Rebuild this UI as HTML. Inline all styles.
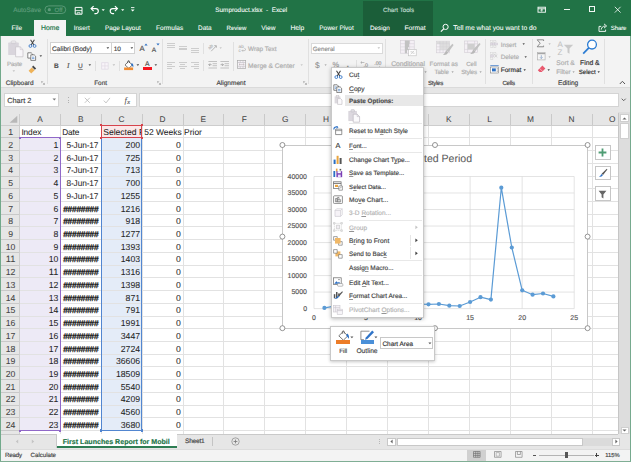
<!DOCTYPE html>
<html lang="en"><head><meta charset="utf-8"><title>Sumproduct.xlsx - Excel</title>
<style>
html,body{margin:0;padding:0}
body{width:631px;height:462px;overflow:hidden;position:relative;background:#fff;
font-family:"Liberation Sans",sans-serif;text-rendering:geometricPrecision;}
#app{position:absolute;left:0;top:0;width:631px;height:462px;overflow:hidden}
#app div,#app svg,#app span{position:absolute}
#app span{white-space:nowrap;line-height:1;display:block;-webkit-text-stroke:0.16px}
#app u{text-decoration:underline;text-decoration-thickness:0.5px;text-underline-offset:0.8px;text-decoration-color:rgba(60,60,60,0.55)}
</style></head>
<body><div id="app">
<div style="left:0.00px;top:0.00px;width:631.00px;height:36.00px;background:#217346;"></div><div style="left:363.00px;top:1.00px;width:69.80px;height:35.00px;background:#1b5e39;"></div><div style="left:34.30px;top:19.50px;width:31.90px;height:17.00px;background:#f3f3f3;"></div><span id="t0" style="top:8.13px;font-size:6.39px;color:#5e9c7b;left:13.30px;">AutoSave</span><svg style="left:44.00px;top:5.00px;" width="23" height="10" viewBox="0 0 23 10"><rect x="0.9" y="0.9" width="20.8" height="7.6" rx="3.8" fill="none" stroke="#5e9c7b" stroke-width="0.9"/><circle cx="5.3" cy="4.7" r="1.6" fill="#5e9c7b"/></svg><span id="t1" style="top:7.88px;font-size:6.07px;color:#5e9c7b;left:54.50px;">Off</span><svg style="left:74.00px;top:5.50px;" width="10" height="10" viewBox="0 0 10 10"><path d="M1.2 1.4h6.8v6.8H1.2z" fill="none" stroke="#fff" stroke-width="1"/><path d="M1.2 4.6h6.8" stroke="#fff" stroke-width="0.8"/><path d="M3.2 8.2V6.6h2.8v1.6" fill="none" stroke="#fff" stroke-width="0.7"/></svg><svg style="left:90.00px;top:5.00px;" width="16" height="10" viewBox="0 0 16 10"><path d="M1.2 3.6h4.6a2.5 2.5 0 0 1 0 5H4.4" fill="none" stroke="#fff" stroke-width="1.2"/><path d="M3.6 1.1L1.1 3.6l2.5 2.5" fill="none" stroke="#fff" stroke-width="1.2"/><path d="M11.6 4.2h3.2l-1.6 1.7z" fill="#fff"/></svg><svg style="left:109.00px;top:5.00px;" width="16" height="10" viewBox="0 0 16 10"><path d="M8.3 3.6H3.7a2.5 2.5 0 0 0 0 5H5.1" fill="none" stroke="#fff" stroke-width="1.2"/><path d="M5.9 1.1l2.5 2.5-2.5 2.5" fill="none" stroke="#fff" stroke-width="1.2"/><path d="M12.1 4.2h3.2l-1.6 1.7z" fill="#fff"/></svg><svg style="left:130.00px;top:6.00px;" width="6" height="8" viewBox="0 0 6 8"><path d="M1 1.6h3.4" stroke="#fff" stroke-width="0.9"/><path d="M0.8 3.6h3.8L2.7 5.6z" fill="#fff"/></svg><span id="t2" style="top:8.13px;font-size:6.38px;color:#fff;left:215.30px;-webkit-text-stroke:0.06px;">Sumproduct.xlsx&nbsp; -&nbsp; Excel</span><span id="t3" style="top:8.09px;font-size:6.16px;color:#bfd9cb;left:383.00px;">Chart Tools</span><svg style="left:536.50px;top:5.50px;" width="10" height="8" viewBox="0 0 10 8"><rect x="1" y="1.2" width="7.4" height="5" fill="none" stroke="#fff" stroke-width="0.9"/><path d="M1 2.8h7.4M4.7 3.4v2.2" stroke="#fff" stroke-width="0.9"/><path d="M3.4 4.4l1.3-1.2 1.3 1.2" fill="none" stroke="#fff" stroke-width="0.7"/></svg><div style="left:564.20px;top:8.80px;width:5.70px;height:0.70px;background:rgba(255,255,255,0.92);"></div><div style="left:589.30px;top:6.20px;width:6.00px;height:5.70px;border:0.75px solid rgba(255,255,255,0.95);box-sizing:border-box;"></div><svg style="left:614.00px;top:5.50px;" width="8" height="8" viewBox="0 0 8 8"><path d="M0.8 0.8l5.8 5.8M6.6 0.8L0.8 6.6" stroke="#fff" stroke-width="0.8"/></svg><span id="t4" style="top:26.01px;font-size:6.47px;color:#fff;left:11.60px;-webkit-text-stroke:0.06px;">File</span><span id="t5" style="top:26.01px;font-size:6.49px;color:#fff;left:73.70px;-webkit-text-stroke:0.06px;">Insert</span><span id="t6" style="top:26.01px;font-size:6.37px;color:#fff;left:105.00px;-webkit-text-stroke:0.06px;">Page Layout</span><span id="t7" style="top:26.01px;font-size:6.56px;color:#fff;left:156.00px;-webkit-text-stroke:0.06px;">Formulas</span><span id="t8" style="top:26.01px;font-size:6.4px;color:#fff;left:198.10px;-webkit-text-stroke:0.06px;">Data</span><span id="t9" style="top:26.01px;font-size:6.13px;color:#fff;letter-spacing:-0.010px;left:226.50px;-webkit-text-stroke:0.06px;">Review</span><span id="t10" style="top:26.01px;font-size:6.57px;color:#fff;left:261.30px;-webkit-text-stroke:0.06px;">View</span><span id="t11" style="top:26.01px;font-size:6.72px;color:#fff;left:290.50px;-webkit-text-stroke:0.06px;">Help</span><span id="t12" style="top:26.01px;font-size:6.46px;color:#fff;left:319.30px;-webkit-text-stroke:0.06px;">Power Pivot</span><span id="t13" style="top:26.01px;font-size:6.34px;color:#fff;left:370.00px;-webkit-text-stroke:0.06px;">Design</span><span id="t14" style="top:26.01px;font-size:6.67px;color:#fff;left:404.50px;-webkit-text-stroke:0.06px;">Format</span><span id="t15" style="top:26.01px;font-size:6.83px;color:#217346;left:41.00px;">Home</span><svg style="left:440.00px;top:22.50px;" width="10" height="10" viewBox="0 0 10 10"><circle cx="5.6" cy="3.9" r="2.6" fill="none" stroke="#fff" stroke-width="1"/><path d="M3.7 5.8L0.9 8.7" stroke="#fff" stroke-width="1.2"/></svg><span id="t16" style="top:26.01px;font-size:6.76px;color:#fff;left:453.30px;-webkit-text-stroke:0.06px;">Tell me what you want to do</span><svg style="left:597.50px;top:22.50px;" width="10" height="10" viewBox="0 0 10 10"><path d="M3.2 3.4H1v5h6.6V6.6" fill="none" stroke="#fff" stroke-width="0.9"/><path d="M3.2 6.6c0.3-2.2 1.6-3.4 4-3.6" fill="none" stroke="#fff" stroke-width="0.9"/><path d="M6 0.9l2.6 2.1L6 5.1" fill="none" stroke="#fff" stroke-width="0.9"/></svg><span id="t17" style="top:26.01px;font-size:6.13px;color:#fff;letter-spacing:-0.184px;left:610.80px;-webkit-text-stroke:0.06px;">Share</span><div style="left:0.00px;top:36.00px;width:631.00px;height:51.00px;background:#f3f3f3;"></div><div style="left:0.00px;top:86.60px;width:631.00px;height:1.00px;background:#dadada;"></div><div style="left:47.10px;top:38.50px;width:0.80px;height:45.50px;background:#e0e0e0;"></div><div style="left:161.90px;top:38.50px;width:0.80px;height:45.50px;background:#e0e0e0;"></div><div style="left:308.20px;top:38.50px;width:0.80px;height:45.50px;background:#e0e0e0;"></div><div style="left:384.90px;top:38.50px;width:0.80px;height:45.50px;background:#e0e0e0;"></div><div style="left:485.30px;top:38.50px;width:0.80px;height:45.50px;background:#e0e0e0;"></div><div style="left:532.10px;top:38.50px;width:0.80px;height:45.50px;background:#e0e0e0;"></div><div style="left:604.30px;top:38.50px;width:0.80px;height:45.50px;background:#e0e0e0;"></div><svg style="left:7.00px;top:40.00px;" width="18" height="18" viewBox="0 0 18 18"><rect x="1.2" y="2.6" width="10.6" height="12.4" rx="0.6" fill="#d9d5dc"/><rect x="4.2" y="1.0" width="4.6" height="2.6" rx="0.8" fill="none" stroke="#cfcbd2" stroke-width="0.8"/><path d="M8.6 6.8h4.6l2.8 2.8v7.2H8.6z" fill="#f8f6f9" stroke="#c9c5cc" stroke-width="0.8"/><path d="M13.2 6.8v2.8H16" fill="none" stroke="#c9c5cc" stroke-width="0.6"/></svg><span id="t18" style="top:61.51px;font-size:6.13px;color:#adadad;letter-spacing:-0.099px;left:7.00px;">Paste</span><svg style="left:12.40px;top:70.40px;" width="3.6" height="3" viewBox="0 0 3.6 3"><path d="M0.5 0.3h2.6L1.8 2.1z" fill="#c4c4c4"/></svg><svg style="left:27.50px;top:39.40px;" width="9" height="9" viewBox="0 0 9 9"><path d="M2.6 0.8l3.3 5.2M6.4 0.8L3.1 6" stroke="#444" stroke-width="1.05" fill="none"/><circle cx="2.4" cy="7" r="1.4" fill="none" stroke="#2b6fc4" stroke-width="0.8"/><circle cx="6.6" cy="7" r="1.4" fill="none" stroke="#2b6fc4" stroke-width="0.8"/></svg><svg style="left:27.00px;top:52.00px;" width="10" height="9" viewBox="0 0 10 9"><path d="M0.8 0.8h3.4l1.3 1.3v4H0.8z" fill="#fff" stroke="#555" stroke-width="0.7"/><path d="M3.8 2.8h3.4l1.4 1.4v4.2H3.8z" fill="#fff" stroke="#555" stroke-width="0.7"/><path d="M5 5.2h2.4M5 6.6h2.4" stroke="#2b6fc4" stroke-width="0.6"/></svg><svg style="left:39.40px;top:55.40px;" width="3.6" height="3" viewBox="0 0 3.6 3"><path d="M0.5 0.3h2.6L1.8 2.1z" fill="#555"/></svg><svg style="left:28.00px;top:64.60px;" width="9" height="9" viewBox="0 0 9 9"><path d="M5.2 0.6l3 3-1.4 1.2-2.8-2.8z" fill="#444"/><path d="M3.8 2.4l2.8 2.8-3.4 3.2L0.6 5.8z" fill="#eeb258"/></svg><span id="t19" style="top:80.91px;font-size:6.53px;color:#444;left:5.70px;">Clipboard</span><svg style="left:41.00px;top:80.80px;" width="4" height="4" viewBox="0 0 4 4"><path d="M0.3 2.2V0.3h1.9" fill="none" stroke="#9a9a9a" stroke-width="0.6"/><path d="M1.5 1.5l1.9 1.9M3.5 1.9v1.6H1.9" fill="none" stroke="#9a9a9a" stroke-width="0.6"/></svg><div style="left:50.00px;top:42.20px;width:62.00px;height:12.20px;background:#fff;border:0.6px solid #d2d2d2;box-sizing:border-box;"></div><span id="t20" style="top:46.71px;font-size:6.62px;color:#444;left:52.00px;">Calibri (Body)</span><svg style="left:105.70px;top:47.20px;" width="3.6" height="3" viewBox="0 0 3.6 3"><path d="M0.5 0.3h2.6L1.8 2.1z" fill="#555"/></svg><div style="left:111.00px;top:42.20px;width:24.20px;height:12.20px;background:#fff;border:0.6px solid #d2d2d2;box-sizing:border-box;"></div><span id="t21" style="top:46.73px;font-size:6.5px;color:#444;left:113.70px;">10</span><svg style="left:129.50px;top:47.20px;" width="3.6" height="3" viewBox="0 0 3.6 3"><path d="M0.5 0.3h2.6L1.8 2.1z" fill="#555"/></svg><span id="t22" style="top:45.36px;font-size:7.7px;color:#555;left:139.40px;">A</span><svg style="left:144.00px;top:43.20px;" width="4" height="3" viewBox="0 0 4 3"><path d="M0.4 2.4L2 0.5l1.6 1.9z" fill="#2b6fc4"/></svg><span id="t23" style="top:47.56px;font-size:6.6px;color:#555;left:151.80px;">A</span><svg style="left:155.50px;top:43.40px;" width="4" height="3" viewBox="0 0 4 3"><path d="M0.4 0.5h3.2L2 2.4z" fill="#2b6fc4"/></svg><span id="t24" style="top:63.73px;font-size:6.5px;color:#505050;font-weight:700;left:54.00px;">B</span><span id="t25" style="top:62.98px;font-size:7.2px;color:#505050;font-style:italic;font-family:'Liberation Serif',serif;left:66.90px;">I</span><span id="t26" style="top:63.56px;font-size:6.6px;color:#505050;left:77.90px;"><u>U</u></span><svg style="left:88.10px;top:64.00px;" width="3.6" height="3" viewBox="0 0 3.6 3"><path d="M0.5 0.3h2.6L1.8 2.1z" fill="#555"/></svg><div style="left:95.40px;top:60.50px;width:0.80px;height:10.50px;background:#e0e0e0;"></div><svg style="left:100.60px;top:61.60px;" width="8" height="8" viewBox="0 0 8 8"><path d="M0.6 0.6h6.6v6.6H0.6zM3.9 0.6v6.6M0.6 3.9h6.6" fill="#f8f4f9" stroke="#e0d8e3" stroke-width="0.7"/></svg><svg style="left:111.80px;top:64.00px;" width="3.6" height="3" viewBox="0 0 3.6 3"><path d="M0.5 0.3h2.6L1.8 2.1z" fill="#c4c4c4"/></svg><div style="left:119.10px;top:60.50px;width:0.80px;height:10.50px;background:#e0e0e0;"></div><svg style="left:123.80px;top:59.80px;" width="10" height="11" viewBox="0 0 10 11"><path d="M4.6 1.4l3.7 3.6-3.5 3.4L1 4.9z" fill="#fff" stroke="#555" stroke-width="0.8"/><path d="M3.7 3.2V1.6a0.9 0.9 0 0 1 1.8 0v1.3" fill="none" stroke="#444" stroke-width="0.7"/><path d="M7.8 2.9c1.4 1 1.9 2.4 1.4 4.4-0.5-1.1-1.2-1.9-2.2-2.6z" fill="#2b6fc4"/><rect x="0.1" y="7.5" width="9" height="2.6" fill="#f08c32"/></svg><svg style="left:135.60px;top:64.00px;" width="3.6" height="3" viewBox="0 0 3.6 3"><path d="M0.5 0.3h2.6L1.8 2.1z" fill="#555"/></svg><span id="t27" style="top:62.43px;font-size:6.8px;color:#555;left:144.90px;">A</span><div style="left:142.80px;top:67.30px;width:8.90px;height:2.60px;background:#f5141e;"></div><svg style="left:154.20px;top:64.00px;" width="3.6" height="3" viewBox="0 0 3.6 3"><path d="M0.5 0.3h2.6L1.8 2.1z" fill="#555"/></svg><span id="t28" style="top:80.91px;font-size:6.4px;color:#444;left:94.20px;">Font</span><svg style="left:156.60px;top:80.80px;" width="4" height="4" viewBox="0 0 4 4"><path d="M0.3 2.2V0.3h1.9" fill="none" stroke="#9a9a9a" stroke-width="0.6"/><path d="M1.5 1.5l1.9 1.9M3.5 1.9v1.6H1.9" fill="none" stroke="#9a9a9a" stroke-width="0.6"/></svg><div style="left:167.00px;top:43.25px;width:7.80px;height:0.70px;background:#cdcdcd;"></div><div style="left:167.00px;top:45.25px;width:7.80px;height:0.70px;background:#cdcdcd;"></div><div style="left:167.00px;top:47.05px;width:7.80px;height:0.70px;background:#cdcdcd;"></div><div style="left:179.00px;top:45.65px;width:7.80px;height:0.70px;background:#cdcdcd;"></div><div style="left:179.00px;top:47.55px;width:7.80px;height:0.70px;background:#cdcdcd;"></div><div style="left:179.00px;top:49.35px;width:7.80px;height:0.70px;background:#cdcdcd;"></div><div style="left:191.20px;top:48.25px;width:7.80px;height:0.70px;background:#cdcdcd;"></div><div style="left:191.20px;top:50.15px;width:7.80px;height:0.70px;background:#cdcdcd;"></div><div style="left:191.20px;top:52.05px;width:7.80px;height:0.70px;background:#cdcdcd;"></div><div style="left:203.10px;top:42.80px;width:0.80px;height:11.00px;background:#e0e0e0;"></div><svg style="left:207.60px;top:43.40px;" width="10" height="9" viewBox="0 0 10 9"><path d="M3.2 8.2l5-5.2" stroke="#a4a4a4" stroke-width="0.8"/><path d="M6.2 2.6h2.2v2.2" fill="none" stroke="#a4a4a4" stroke-width="0.7"/><text x="0.2" y="5.6" font-size="4.8" fill="#a0a0a0" font-family="Liberation Sans,sans-serif" transform="rotate(-42 2.4 4.6)">ab</text></svg><svg style="left:218.50px;top:47.20px;" width="3.4" height="3" viewBox="0 0 3.4 3"><path d="M0.5 0.3h2.4L1.7 2.1z" fill="#c8c8c8"/></svg><div style="left:232.50px;top:41.60px;width:0.80px;height:29.80px;background:#e0e0e0;"></div><div style="left:167.00px;top:62.05px;width:7.80px;height:0.70px;background:#cdcdcd;"></div><div style="left:167.00px;top:63.95px;width:5.40px;height:0.70px;background:#cdcdcd;"></div><div style="left:167.00px;top:65.75px;width:7.80px;height:0.70px;background:#cdcdcd;"></div><div style="left:167.00px;top:67.55px;width:5.40px;height:0.70px;background:#cdcdcd;"></div><div style="left:179.00px;top:62.05px;width:7.80px;height:0.70px;background:#cdcdcd;"></div><div style="left:180.40px;top:63.95px;width:5.00px;height:0.70px;background:#cdcdcd;"></div><div style="left:179.00px;top:65.75px;width:7.80px;height:0.70px;background:#cdcdcd;"></div><div style="left:180.40px;top:67.55px;width:5.00px;height:0.70px;background:#cdcdcd;"></div><div style="left:191.20px;top:62.05px;width:7.80px;height:0.70px;background:#cdcdcd;"></div><div style="left:193.60px;top:63.95px;width:5.40px;height:0.70px;background:#cdcdcd;"></div><div style="left:191.20px;top:65.75px;width:7.80px;height:0.70px;background:#cdcdcd;"></div><div style="left:193.60px;top:67.55px;width:5.40px;height:0.70px;background:#cdcdcd;"></div><div style="left:203.10px;top:60.00px;width:0.80px;height:11.20px;background:#e0e0e0;"></div><svg style="left:207.80px;top:61.00px;" width="9.5" height="8" viewBox="0 0 9.5 8"><path d="M0.4 0.5h8.6M4.6 2.7h4.4M4.6 4.7h4.4M0.4 7h8.6" stroke="#b4b4b4" stroke-width="0.8"/><path d="M3.6 3.7H0.8M2.1 2.4L0.8 3.7l1.3 1.3" fill="none" stroke="#9c9c9c" stroke-width="0.8"/></svg><svg style="left:220.00px;top:61.00px;" width="9.5" height="8" viewBox="0 0 9.5 8"><path d="M0.4 0.5h8.6M4.6 2.7h4.4M4.6 4.7h4.4M0.4 7h8.6" stroke="#b4b4b4" stroke-width="0.8"/><path d="M0.6 3.7h2.8M2.1 2.4l1.3 1.3-1.3 1.3" fill="none" stroke="#9c9c9c" stroke-width="0.8"/></svg><svg style="left:237.60px;top:44.20px;" width="8" height="8" viewBox="0 0 8 8"><text x="0.6" y="3.7" font-size="4.6" fill="#9c9c9c" font-family="Liberation Sans,sans-serif">ab</text><text x="0.6" y="7.6" font-size="4.6" fill="#9c9c9c" font-family="Liberation Sans,sans-serif">c</text><path d="M4 6.6h2.4a1.1 1.1 0 0 0 0-2.2" fill="none" stroke="#a4a4a4" stroke-width="0.6"/><path d="M4.8 5.7l-0.9 0.9 0.9 0.9" fill="none" stroke="#a4a4a4" stroke-width="0.6"/></svg><span id="t29" style="top:46.71px;font-size:6.39px;color:#adadad;left:248.00px;">Wrap Text</span><svg style="left:237.00px;top:60.40px;" width="9.4" height="9" viewBox="0 0 9.4 9"><rect x="0.5" y="0.5" width="8.2" height="7.8" fill="#f6f3f7" stroke="#a8a8a8" stroke-width="0.7"/><path d="M0.5 2.5h8.2M0.5 6.3h8.2M3.2 0.5v2M6 0.5v2M3.2 6.3v2M6 6.3v2" stroke="#b4b0b6" stroke-width="0.5"/><path d="M2 4.4h5.2M3 3.6l-1 0.8 1 0.8M6.2 3.6l1 0.8-1 0.8" fill="none" stroke="#b0a4a8" stroke-width="0.5"/></svg><span id="t30" style="top:64.01px;font-size:6.61px;color:#adadad;left:248.00px;">Merge &amp; Center</span><svg style="left:299.90px;top:64.20px;" width="3.4" height="3" viewBox="0 0 3.4 3"><path d="M0.5 0.3h2.4L1.7 2.1z" fill="#c8c8c8"/></svg><span id="t31" style="top:80.91px;font-size:6.55px;color:#444;left:216.40px;">Alignment</span><svg style="left:303.00px;top:80.80px;" width="4" height="4" viewBox="0 0 4 4"><path d="M0.3 2.2V0.3h1.9" fill="none" stroke="#9a9a9a" stroke-width="0.6"/><path d="M1.5 1.5l1.9 1.9M3.5 1.9v1.6H1.9" fill="none" stroke="#9a9a9a" stroke-width="0.6"/></svg><div style="left:311.00px;top:42.60px;width:72.20px;height:11.80px;background:#fff;border:0.6px solid #dadada;box-sizing:border-box;"></div><span id="t32" style="top:46.91px;font-size:6.17px;color:#8e8e8e;left:312.80px;">General</span><svg style="left:377.40px;top:47.30px;" width="3.6" height="3" viewBox="0 0 3.6 3"><path d="M0.5 0.3h2.6L1.8 2.1z" fill="#c4c4c4"/></svg><span id="t33" style="top:60.61px;font-size:8.4px;color:#8c8c8c;left:315.00px;-webkit-text-stroke:0.05px;">$</span><svg style="left:324.40px;top:64.40px;" width="3.2" height="3" viewBox="0 0 3.2 3"><path d="M0.5 0.3h2.2L1.6 2.1z" fill="#b0b0b0"/></svg><span id="t34" style="top:61.25px;font-size:7.4px;color:#9c9c9c;left:332.40px;">%</span><span id="t35" style="top:59.82px;font-size:9px;color:#8c8c8c;font-weight:700;left:346.40px;-webkit-text-stroke:0.05px;">,</span><div style="left:356.00px;top:60.00px;width:0.80px;height:11.20px;background:#e0e0e0;"></div><span id="t36" style="top:64.33px;font-size:5.4px;color:#9a9a9a;left:363.40px;">.0</span><svg style="left:360.40px;top:61.20px;" width="5" height="3" viewBox="0 0 5 3"><path d="M4.4 1.5H0.8M2 0.4L0.8 1.5 2 2.6" fill="none" stroke="#9a9a9a" stroke-width="0.6"/></svg><span id="t37" style="top:62.46px;font-size:5.2px;color:#9a9a9a;left:374.20px;">.00</span><svg style="left:376.20px;top:65.60px;" width="5" height="3" viewBox="0 0 5 3"><path d="M0.6 1.5h3.6M3 0.4l1.2 1.1L3 2.6" fill="none" stroke="#9a9a9a" stroke-width="0.6"/></svg><span id="t38" style="top:80.91px;font-size:6.19px;color:#444;left:334.00px;">Number</span><svg style="left:380.00px;top:80.80px;" width="4" height="4" viewBox="0 0 4 4"><path d="M0.3 2.2V0.3h1.9" fill="none" stroke="#9a9a9a" stroke-width="0.6"/><path d="M1.5 1.5l1.9 1.9M3.5 1.9v1.6H1.9" fill="none" stroke="#9a9a9a" stroke-width="0.6"/></svg><svg style="left:400.00px;top:40.40px;" width="17.5" height="17" viewBox="0 0 17.5 17"><rect x="0.6" y="0.6" width="13.6" height="12.6" fill="#f4f0f5" stroke="#d2cdd5" stroke-width="0.6"/><path d="M0.6 3.7h13.6M0.6 6.9h13.6M0.6 10h13.6M5 0.6v12.6M9.6 0.6v12.6" stroke="#d2cdd5" stroke-width="0.5"/><path d="M5 0.6h4.6v3.1H5zM5 3.7h4v3.2H5zM5 6.9h3.2V10H5zM5 10h2v3.2H5z" fill="#c2c2c2"/><rect x="8.6" y="9.4" width="7.6" height="6.4" fill="#fff" stroke="#bdbdbd" stroke-width="0.6"/><path d="M10.6 14.2l3.6-3.4M10.4 11.8h2.2M12.6 13.2h2" stroke="#c0c0c0" stroke-width="0.7"/></svg><span id="t39" style="top:61.51px;font-size:6.77px;color:#adadad;left:391.20px;">Conditional</span><span id="t40" style="top:69.91px;font-size:6.41px;color:#adadad;left:392.40px;">Formatting</span><svg style="left:424.00px;top:70.60px;" width="3.2" height="3" viewBox="0 0 3.2 3"><path d="M0.5 0.3h2.2L1.6 2.1z" fill="#aaaaaa"/></svg><svg style="left:436.00px;top:40.40px;" width="18" height="17" viewBox="0 0 18 17"><rect x="0.6" y="1.2" width="13" height="11.6" fill="#f4f0f5" stroke="#d2cdd5" stroke-width="0.6"/><rect x="0.6" y="1.2" width="13" height="2.6" fill="#dcdcdc"/><path d="M0.6 3.8h13M0.6 6.8h13M0.6 9.8h13M3.9 1.2v11.6M7.1 1.2v11.6M10.4 1.2v11.6" stroke="#cfcad2" stroke-width="0.5"/><rect x="3.9" y="3.8" width="9.7" height="6" fill="#d6d6d6" opacity="0.7"/><path d="M16.4 3.8l1.2 1.1-5.2 7.3-2.2-1.8z" fill="#c2c2c2"/><path d="M10 10.6l2.2 1.8c-1 2-3 2.8-5.4 2.4 2-0.8 2.2-2.2 3.2-4.2z" fill="#b8b8b8"/></svg><span id="t41" style="top:61.51px;font-size:6.3px;color:#adadad;left:429.60px;">Format as</span><span id="t42" style="top:69.91px;font-size:6.13px;color:#adadad;letter-spacing:-0.005px;left:434.40px;">Table</span><svg style="left:450.60px;top:70.60px;" width="3.2" height="3" viewBox="0 0 3.2 3"><path d="M0.5 0.3h2.2L1.6 2.1z" fill="#aaaaaa"/></svg><svg style="left:464.20px;top:40.40px;" width="17" height="17" viewBox="0 0 17 17"><rect x="0.6" y="1" width="13" height="11.4" fill="#f4f0f5" stroke="#d2cdd5" stroke-width="0.6"/><path d="M0.6 3.8h13M0.6 9.4h13M3.6 1v11.4M10.6 1v11.4" stroke="#cfcad2" stroke-width="0.5"/><rect x="3.6" y="3.8" width="7" height="5.6" fill="#cfcfcf"/><path d="M15.4 3l1.2 1.1-5.2 7.1-2.2-1.8z" fill="#c2c2c2"/><path d="M9.2 9.6l2.2 1.8c-1 2-3 2.8-5.4 2.4 2-0.8 2.2-2.2 3.2-4.2z" fill="#b8b8b8"/></svg><span id="t43" style="top:61.51px;font-size:6.13px;color:#adadad;letter-spacing:-0.068px;left:466.20px;">Cell</span><span id="t44" style="top:69.91px;font-size:6.13px;color:#adadad;letter-spacing:-0.155px;left:461.20px;">Styles</span><svg style="left:478.80px;top:70.60px;" width="3.2" height="3" viewBox="0 0 3.2 3"><path d="M0.5 0.3h2.2L1.6 2.1z" fill="#aaaaaa"/></svg><span id="t45" style="top:80.91px;font-size:6.13px;color:#444;letter-spacing:-0.246px;left:427.90px;">Styles</span><svg style="left:490.00px;top:39.80px;" width="8.4" height="8.4" viewBox="0 0 9 9"><path d="M0.5 0.5h2.4v2.2H0.5zM0.5 5.8h2.4V8H0.5zM4 5.8h2.4V8H4zM4 0.5h2.4v2.2H4z" fill="none" stroke="#c2c2c2" stroke-width="0.55" stroke-dasharray="0.9 0.5"/><path d="M0.4 3.5h7.8v1.6H0.4z" fill="#e9e4ec" stroke="#c2bcc6" stroke-width="0.5"/><path d="M2.6 3.5v1.6M4.8 3.5v1.6" stroke="#c2bcc6" stroke-width="0.5"/></svg><span id="t46" style="top:42.71px;font-size:6.25px;color:#adadad;left:500.70px;">Insert</span><svg style="left:521.50px;top:43.20px;" width="3.4" height="3" viewBox="0 0 3.4 3"><path d="M0.5 0.3h2.4L1.7 2.1z" fill="#555"/></svg><svg style="left:490.00px;top:52.40px;" width="8.4" height="8.4" viewBox="0 0 9 9"><path d="M0.5 0.5h2.4v2.2H0.5zM0.5 5.8h2.4V8H0.5zM4 0.5h2.4v2.2H4z" fill="none" stroke="#c2c2c2" stroke-width="0.55" stroke-dasharray="0.9 0.5"/><path d="M0.4 3.5h3.4v1.6H0.4z" fill="#e9e4ec" stroke="#c2bcc6" stroke-width="0.5"/><path d="M4.6 2.8l3.2 3M7.8 2.8l-3.2 3" stroke="#c2c2c2" stroke-width="0.7"/></svg><span id="t47" style="top:55.11px;font-size:6.34px;color:#adadad;left:500.70px;">Delete</span><svg style="left:524.30px;top:55.60px;" width="3.4" height="3" viewBox="0 0 3.4 3"><path d="M0.5 0.3h2.4L1.7 2.1z" fill="#555"/></svg><svg style="left:489.80px;top:65.00px;" width="9" height="9" viewBox="0 0 9 9"><rect x="0.6" y="2" width="7.8" height="6" fill="#fff" stroke="#7d7d7d" stroke-width="0.6"/><path d="M0.3 0.6h8.4" stroke="#2b6fc4" stroke-width="0.7"/><rect x="2" y="3.4" width="3.8" height="3" fill="#2b6fc4"/><path d="M6.6 3.6h1.4M6.6 5h1.4M6.6 6.4h1.4" stroke="#777" stroke-width="0.5"/></svg><span id="t48" style="top:68.21px;font-size:6.52px;color:#303030;left:500.70px;">Format</span><svg style="left:523.20px;top:68.80px;" width="3.4" height="3" viewBox="0 0 3.4 3"><path d="M0.5 0.3h2.4L1.7 2.1z" fill="#444"/></svg><span id="t49" style="top:80.91px;font-size:6.13px;color:#444;letter-spacing:-0.222px;left:502.40px;">Cells</span><svg style="left:536.00px;top:39.40px;" width="9.4" height="9" viewBox="0 0 9.4 9"><path d="M7.6 2V0.8H1.2l3 3.4-3 3.6h6.4V6.6" fill="none" stroke="#7a7a7a" stroke-width="0.85"/></svg><svg style="left:548.20px;top:43.20px;" width="3.2" height="3" viewBox="0 0 3.2 3"><path d="M0.5 0.3h2.2L1.6 2.1z" fill="#bdbdbd"/></svg><svg style="left:536.60px;top:52.00px;" width="9" height="9" viewBox="0 0 9 9"><rect x="0.5" y="0.5" width="7.6" height="7.4" fill="#f6f6f6" stroke="#b4b4b4" stroke-width="0.7"/><path d="M0.5 1.6h7.6" stroke="#a6a6a6" stroke-width="1.2"/><path d="M4.3 3.2v3.2M3 5.3l1.3 1.3 1.3-1.3" fill="none" stroke="#8aa4c6" stroke-width="0.8"/></svg><svg style="left:548.20px;top:55.60px;" width="3.2" height="3" viewBox="0 0 3.2 3"><path d="M0.5 0.3h2.2L1.6 2.1z" fill="#bdbdbd"/></svg><svg style="left:536.60px;top:65.00px;" width="9" height="8" viewBox="0 0 9 8"><path d="M5.4 0.6l3 2.8-3.6 3.6H2.6L0.8 5.2z" fill="#e8596e"/><path d="M2.6 3.4l3 3" stroke="#fff" stroke-width="0.5"/></svg><svg style="left:547.10px;top:68.80px;" width="3.4" height="3" viewBox="0 0 3.4 3"><path d="M0.5 0.3h2.4L1.7 2.1z" fill="#444"/></svg><svg style="left:557.00px;top:40.00px;" width="18" height="17" viewBox="0 0 18 17"><text x="0.4" y="6.6" font-size="8" fill="#c0c0c0" font-family="Liberation Sans,sans-serif">A</text><text x="0.6" y="15" font-size="8" fill="#c0c0c0" font-family="Liberation Sans,sans-serif">Z</text><path d="M6.8 4.8h9.4l-3.7 3.8v5.2l-2-1.4v-3.8z" fill="#c9c9c9"/></svg><span id="t50" style="top:61.41px;font-size:6.67px;color:#adadad;left:556.30px;">Sort &amp;</span><span id="t51" style="top:69.91px;font-size:6.44px;color:#adadad;left:556.30px;">Filter</span><svg style="left:572.20px;top:70.60px;" width="3.2" height="3" viewBox="0 0 3.2 3"><path d="M0.5 0.3h2.2L1.6 2.1z" fill="#aaaaaa"/></svg><svg style="left:581.60px;top:39.40px;" width="17" height="17" viewBox="0 0 17 17"><circle cx="10" cy="5.6" r="4.4" fill="#fff" stroke="#2b7cd3" stroke-width="1.3"/><path d="M6.8 8.8L1.2 14.6" stroke="#2b7cd3" stroke-width="1.7"/></svg><span id="t52" style="top:61.41px;font-size:6.79px;color:#303030;left:580.00px;">Find &amp;</span><span id="t53" style="top:69.91px;font-size:6.13px;color:#303030;letter-spacing:-0.038px;left:578.80px;">Select</span><svg style="left:597.20px;top:70.50px;" width="3.4" height="3" viewBox="0 0 3.4 3"><path d="M0.5 0.3h2.4L1.7 2.1z" fill="#444"/></svg><span id="t54" style="top:80.91px;font-size:6.65px;color:#444;left:558.00px;">Editing</span><svg style="left:619.00px;top:80.00px;" width="7" height="5" viewBox="0 0 7 5"><path d="M0.8 4l2.6-2.7L6 4" fill="none" stroke="#555" stroke-width="1"/></svg><div style="left:0.00px;top:87.60px;width:631.00px;height:24.70px;background:#e6e6e6;"></div><div style="left:3.80px;top:92.70px;width:55.40px;height:14.30px;background:#fff;border:0.6px solid #d4d4d4;box-sizing:border-box;"></div><span id="t55" style="top:96.78px;font-size:7.39px;color:#444;left:7.20px;">Chart 2</span><svg style="left:52.00px;top:98.40px;" width="5" height="4" viewBox="0 0 5 4"><path d="M0.5 0.6h3.6L2.3 2.6z" fill="#777"/></svg><div style="left:67.50px;top:97.20px;width:1.00px;height:1.00px;background:#b0b0b0;"></div><div style="left:67.50px;top:99.50px;width:1.00px;height:1.00px;background:#b0b0b0;"></div><div style="left:67.50px;top:101.80px;width:1.00px;height:1.00px;background:#b0b0b0;"></div><div style="left:76.80px;top:92.70px;width:59.80px;height:14.30px;background:#fff;border:0.6px solid #d4d4d4;box-sizing:border-box;"></div><svg style="left:83.50px;top:96.50px;" width="7" height="7" viewBox="0 0 7 7"><path d="M0.8 0.8l5 5M5.8 0.8l-5 5" stroke="#bdbdbd" stroke-width="0.9"/></svg><svg style="left:103.00px;top:96.50px;" width="8" height="7" viewBox="0 0 8 7"><path d="M0.8 3.6l2.2 2.3L7 0.9" fill="none" stroke="#bdbdbd" stroke-width="0.9"/></svg><span id="t56" style="top:96.08px;font-size:8.6px;color:#555;font-style:italic;font-family:'Liberation Serif',serif;left:124.60px;-webkit-text-stroke:0.05px;">f</span><span id="t57" style="top:99.62px;font-size:6.2px;color:#555;font-style:italic;font-family:'Liberation Serif',serif;left:127.20px;">x</span><div style="left:139.40px;top:92.70px;width:479.60px;height:14.30px;background:#fff;border:0.6px solid #d4d4d4;box-sizing:border-box;"></div><svg style="left:620.60px;top:98.00px;" width="6" height="4" viewBox="0 0 6 4"><path d="M0.7 0.7l2 2 2-2" fill="none" stroke="#555" stroke-width="0.9"/></svg><div style="left:1.30px;top:112.30px;width:629.70px;height:321.70px;background:#fff;"></div><div style="left:1.30px;top:112.30px;width:616.70px;height:12.70px;background:#e6e6e6;"></div><div style="left:1.30px;top:112.30px;width:18.50px;height:321.70px;background:#e6e6e6;"></div><div style="left:19.80px;top:137.73px;width:40.40px;height:292.79px;background:#edeaf6;"></div><div style="left:101.10px;top:137.73px;width:40.90px;height:292.79px;background:#e4ecf8;"></div><div style="left:101.10px;top:125.00px;width:40.90px;height:12.73px;background:#fbe8e8;"></div><div style="left:19.40px;top:125.00px;width:0.80px;height:309.00px;background:#e2e2e2;"></div><div style="left:19.40px;top:114.30px;width:0.80px;height:10.70px;background:#c9c9c9;"></div><div style="left:59.80px;top:125.00px;width:0.80px;height:309.00px;background:#e2e2e2;"></div><div style="left:59.80px;top:114.30px;width:0.80px;height:10.70px;background:#c9c9c9;"></div><div style="left:100.70px;top:125.00px;width:0.80px;height:309.00px;background:#e2e2e2;"></div><div style="left:100.70px;top:114.30px;width:0.80px;height:10.70px;background:#c9c9c9;"></div><div style="left:141.60px;top:125.00px;width:0.80px;height:309.00px;background:#e2e2e2;"></div><div style="left:141.60px;top:114.30px;width:0.80px;height:10.70px;background:#c9c9c9;"></div><div style="left:182.50px;top:125.00px;width:0.80px;height:309.00px;background:#e2e2e2;"></div><div style="left:182.50px;top:114.30px;width:0.80px;height:10.70px;background:#c9c9c9;"></div><div style="left:223.40px;top:125.00px;width:0.80px;height:309.00px;background:#e2e2e2;"></div><div style="left:223.40px;top:114.30px;width:0.80px;height:10.70px;background:#c9c9c9;"></div><div style="left:264.30px;top:125.00px;width:0.80px;height:309.00px;background:#e2e2e2;"></div><div style="left:264.30px;top:114.30px;width:0.80px;height:10.70px;background:#c9c9c9;"></div><div style="left:305.20px;top:125.00px;width:0.80px;height:309.00px;background:#e2e2e2;"></div><div style="left:305.20px;top:114.30px;width:0.80px;height:10.70px;background:#c9c9c9;"></div><div style="left:346.10px;top:125.00px;width:0.80px;height:309.00px;background:#e2e2e2;"></div><div style="left:346.10px;top:114.30px;width:0.80px;height:10.70px;background:#c9c9c9;"></div><div style="left:387.00px;top:125.00px;width:0.80px;height:309.00px;background:#e2e2e2;"></div><div style="left:387.00px;top:114.30px;width:0.80px;height:10.70px;background:#c9c9c9;"></div><div style="left:427.90px;top:125.00px;width:0.80px;height:309.00px;background:#e2e2e2;"></div><div style="left:427.90px;top:114.30px;width:0.80px;height:10.70px;background:#c9c9c9;"></div><div style="left:468.80px;top:125.00px;width:0.80px;height:309.00px;background:#e2e2e2;"></div><div style="left:468.80px;top:114.30px;width:0.80px;height:10.70px;background:#c9c9c9;"></div><div style="left:509.70px;top:125.00px;width:0.80px;height:309.00px;background:#e2e2e2;"></div><div style="left:509.70px;top:114.30px;width:0.80px;height:10.70px;background:#c9c9c9;"></div><div style="left:550.60px;top:125.00px;width:0.80px;height:309.00px;background:#e2e2e2;"></div><div style="left:550.60px;top:114.30px;width:0.80px;height:10.70px;background:#c9c9c9;"></div><div style="left:591.50px;top:125.00px;width:0.80px;height:309.00px;background:#e2e2e2;"></div><div style="left:591.50px;top:114.30px;width:0.80px;height:10.70px;background:#c9c9c9;"></div><div style="left:632.40px;top:125.00px;width:0.80px;height:309.00px;background:#e2e2e2;"></div><div style="left:632.40px;top:114.30px;width:0.80px;height:10.70px;background:#c9c9c9;"></div><div style="left:19.80px;top:124.60px;width:598.20px;height:0.80px;background:#e2e2e2;"></div><div style="left:1.30px;top:124.60px;width:18.50px;height:0.80px;background:#c9c9c9;"></div><div style="left:19.80px;top:137.33px;width:598.20px;height:0.80px;background:#e2e2e2;"></div><div style="left:1.30px;top:137.33px;width:18.50px;height:0.80px;background:#c9c9c9;"></div><div style="left:19.80px;top:150.06px;width:598.20px;height:0.80px;background:#e2e2e2;"></div><div style="left:1.30px;top:150.06px;width:18.50px;height:0.80px;background:#c9c9c9;"></div><div style="left:19.80px;top:162.79px;width:598.20px;height:0.80px;background:#e2e2e2;"></div><div style="left:1.30px;top:162.79px;width:18.50px;height:0.80px;background:#c9c9c9;"></div><div style="left:19.80px;top:175.52px;width:598.20px;height:0.80px;background:#e2e2e2;"></div><div style="left:1.30px;top:175.52px;width:18.50px;height:0.80px;background:#c9c9c9;"></div><div style="left:19.80px;top:188.25px;width:598.20px;height:0.80px;background:#e2e2e2;"></div><div style="left:1.30px;top:188.25px;width:18.50px;height:0.80px;background:#c9c9c9;"></div><div style="left:19.80px;top:200.98px;width:598.20px;height:0.80px;background:#e2e2e2;"></div><div style="left:1.30px;top:200.98px;width:18.50px;height:0.80px;background:#c9c9c9;"></div><div style="left:19.80px;top:213.71px;width:598.20px;height:0.80px;background:#e2e2e2;"></div><div style="left:1.30px;top:213.71px;width:18.50px;height:0.80px;background:#c9c9c9;"></div><div style="left:19.80px;top:226.44px;width:598.20px;height:0.80px;background:#e2e2e2;"></div><div style="left:1.30px;top:226.44px;width:18.50px;height:0.80px;background:#c9c9c9;"></div><div style="left:19.80px;top:239.17px;width:598.20px;height:0.80px;background:#e2e2e2;"></div><div style="left:1.30px;top:239.17px;width:18.50px;height:0.80px;background:#c9c9c9;"></div><div style="left:19.80px;top:251.90px;width:598.20px;height:0.80px;background:#e2e2e2;"></div><div style="left:1.30px;top:251.90px;width:18.50px;height:0.80px;background:#c9c9c9;"></div><div style="left:19.80px;top:264.63px;width:598.20px;height:0.80px;background:#e2e2e2;"></div><div style="left:1.30px;top:264.63px;width:18.50px;height:0.80px;background:#c9c9c9;"></div><div style="left:19.80px;top:277.36px;width:598.20px;height:0.80px;background:#e2e2e2;"></div><div style="left:1.30px;top:277.36px;width:18.50px;height:0.80px;background:#c9c9c9;"></div><div style="left:19.80px;top:290.09px;width:598.20px;height:0.80px;background:#e2e2e2;"></div><div style="left:1.30px;top:290.09px;width:18.50px;height:0.80px;background:#c9c9c9;"></div><div style="left:19.80px;top:302.82px;width:598.20px;height:0.80px;background:#e2e2e2;"></div><div style="left:1.30px;top:302.82px;width:18.50px;height:0.80px;background:#c9c9c9;"></div><div style="left:19.80px;top:315.55px;width:598.20px;height:0.80px;background:#e2e2e2;"></div><div style="left:1.30px;top:315.55px;width:18.50px;height:0.80px;background:#c9c9c9;"></div><div style="left:19.80px;top:328.28px;width:598.20px;height:0.80px;background:#e2e2e2;"></div><div style="left:1.30px;top:328.28px;width:18.50px;height:0.80px;background:#c9c9c9;"></div><div style="left:19.80px;top:341.01px;width:598.20px;height:0.80px;background:#e2e2e2;"></div><div style="left:1.30px;top:341.01px;width:18.50px;height:0.80px;background:#c9c9c9;"></div><div style="left:19.80px;top:353.74px;width:598.20px;height:0.80px;background:#e2e2e2;"></div><div style="left:1.30px;top:353.74px;width:18.50px;height:0.80px;background:#c9c9c9;"></div><div style="left:19.80px;top:366.47px;width:598.20px;height:0.80px;background:#e2e2e2;"></div><div style="left:1.30px;top:366.47px;width:18.50px;height:0.80px;background:#c9c9c9;"></div><div style="left:19.80px;top:379.20px;width:598.20px;height:0.80px;background:#e2e2e2;"></div><div style="left:1.30px;top:379.20px;width:18.50px;height:0.80px;background:#c9c9c9;"></div><div style="left:19.80px;top:391.93px;width:598.20px;height:0.80px;background:#e2e2e2;"></div><div style="left:1.30px;top:391.93px;width:18.50px;height:0.80px;background:#c9c9c9;"></div><div style="left:19.80px;top:404.66px;width:598.20px;height:0.80px;background:#e2e2e2;"></div><div style="left:1.30px;top:404.66px;width:18.50px;height:0.80px;background:#c9c9c9;"></div><div style="left:19.80px;top:417.39px;width:598.20px;height:0.80px;background:#e2e2e2;"></div><div style="left:1.30px;top:417.39px;width:18.50px;height:0.80px;background:#c9c9c9;"></div><div style="left:19.80px;top:430.12px;width:598.20px;height:0.80px;background:#e2e2e2;"></div><div style="left:1.30px;top:430.12px;width:18.50px;height:0.80px;background:#c9c9c9;"></div><div style="left:1.30px;top:124.60px;width:616.70px;height:0.80px;background:#cdcdcd;"></div><div style="left:19.40px;top:114.30px;width:0.80px;height:319.70px;background:#cdcdcd;"></div><div style="left:182.30px;top:125.50px;width:1.20px;height:11.73px;background:#fff;"></div><svg style="left:9.00px;top:115.00px;" width="9" height="8.4" viewBox="0 0 9 8.4"><path d="M8.3 0.7v7H0.6z" fill="#b8b8b8"/></svg><span id="t58" style="top:114.67px;font-size:8.3px;color:#444;left:-60.00px;width:200px;text-align:center;-webkit-text-stroke:0.05px;">A</span><span id="t59" style="top:114.67px;font-size:8.3px;color:#444;left:-19.35px;width:200px;text-align:center;-webkit-text-stroke:0.05px;">B</span><span id="t60" style="top:114.67px;font-size:8.3px;color:#444;left:21.55px;width:200px;text-align:center;-webkit-text-stroke:0.05px;">C</span><span id="t61" style="top:114.67px;font-size:8.3px;color:#444;left:62.45px;width:200px;text-align:center;-webkit-text-stroke:0.05px;">D</span><span id="t62" style="top:114.67px;font-size:8.3px;color:#444;left:103.35px;width:200px;text-align:center;-webkit-text-stroke:0.05px;">E</span><span id="t63" style="top:114.67px;font-size:8.3px;color:#444;left:144.25px;width:200px;text-align:center;-webkit-text-stroke:0.05px;">F</span><span id="t64" style="top:114.67px;font-size:8.3px;color:#444;left:185.15px;width:200px;text-align:center;-webkit-text-stroke:0.05px;">G</span><span id="t65" style="top:114.67px;font-size:8.3px;color:#444;left:226.05px;width:200px;text-align:center;-webkit-text-stroke:0.05px;">H</span><span id="t66" style="top:114.67px;font-size:8.3px;color:#444;left:266.95px;width:200px;text-align:center;-webkit-text-stroke:0.05px;">I</span><span id="t67" style="top:114.67px;font-size:8.3px;color:#444;left:307.85px;width:200px;text-align:center;-webkit-text-stroke:0.05px;">J</span><span id="t68" style="top:114.67px;font-size:8.3px;color:#444;left:348.75px;width:200px;text-align:center;-webkit-text-stroke:0.05px;">K</span><span id="t69" style="top:114.67px;font-size:8.3px;color:#444;left:389.65px;width:200px;text-align:center;-webkit-text-stroke:0.05px;">L</span><span id="t70" style="top:114.67px;font-size:8.3px;color:#444;left:430.55px;width:200px;text-align:center;-webkit-text-stroke:0.05px;">M</span><span id="t71" style="top:114.67px;font-size:8.3px;color:#444;left:471.45px;width:200px;text-align:center;-webkit-text-stroke:0.05px;">N</span><span id="t72" style="top:114.67px;font-size:8.3px;color:#444;left:512.35px;width:200px;text-align:center;-webkit-text-stroke:0.05px;">O</span><span id="t73" style="top:128.13px;font-size:8.69px;color:#444;left:-89.40px;width:200px;text-align:center;-webkit-text-stroke:0.05px;">1</span><span id="t74" style="top:128.13px;font-size:8.31px;color:#262626;letter-spacing:-0.097px;left:21.40px;-webkit-text-stroke:0.05px;">Index</span><span id="t75" style="top:128.13px;font-size:8.31px;color:#262626;letter-spacing:-0.103px;left:62.20px;-webkit-text-stroke:0.05px;">Date</span><span id="t76" style="top:128.13px;font-size:8.57px;color:#262626;left:103.20px;-webkit-text-stroke:0.05px;width:38.4px;overflow:hidden;">Selected Period</span><span id="t77" style="top:128.13px;font-size:8.46px;color:#262626;left:144.30px;-webkit-text-stroke:0.05px;">52 Weeks Prior</span><span id="t78" style="top:140.86px;font-size:8.69px;color:#444;left:-89.40px;width:200px;text-align:center;-webkit-text-stroke:0.05px;">2</span><span id="t79" style="top:140.86px;font-size:8.69px;color:#262626;right:572.70px;-webkit-text-stroke:0.05px;">1</span><span id="t80" style="top:140.86px;font-size:8.31px;color:#262626;letter-spacing:-0.096px;left:66.40px;-webkit-text-stroke:0.05px;">5-Jun-17</span><span id="t81" style="top:140.86px;font-size:8.7px;color:#262626;right:490.90px;-webkit-text-stroke:0.05px;">200</span><span id="t82" style="top:140.86px;font-size:8.69px;color:#262626;right:450.10px;-webkit-text-stroke:0.05px;">0</span><span id="t83" style="top:153.59px;font-size:8.69px;color:#444;left:-89.40px;width:200px;text-align:center;-webkit-text-stroke:0.05px;">3</span><span id="t84" style="top:153.59px;font-size:8.69px;color:#262626;right:572.70px;-webkit-text-stroke:0.05px;">2</span><span id="t85" style="top:153.59px;font-size:8.31px;color:#262626;letter-spacing:-0.096px;left:66.40px;-webkit-text-stroke:0.05px;">6-Jun-17</span><span id="t86" style="top:153.59px;font-size:8.7px;color:#262626;right:490.90px;-webkit-text-stroke:0.05px;">725</span><span id="t87" style="top:153.59px;font-size:8.69px;color:#262626;right:450.10px;-webkit-text-stroke:0.05px;">0</span><span id="t88" style="top:166.32px;font-size:8.69px;color:#444;left:-89.40px;width:200px;text-align:center;-webkit-text-stroke:0.05px;">4</span><span id="t89" style="top:166.32px;font-size:8.69px;color:#262626;right:572.70px;-webkit-text-stroke:0.05px;">3</span><span id="t90" style="top:166.32px;font-size:8.31px;color:#262626;letter-spacing:-0.096px;left:66.40px;-webkit-text-stroke:0.05px;">7-Jun-17</span><span id="t91" style="top:166.32px;font-size:8.7px;color:#262626;right:490.90px;-webkit-text-stroke:0.05px;">713</span><span id="t92" style="top:166.32px;font-size:8.69px;color:#262626;right:450.10px;-webkit-text-stroke:0.05px;">0</span><span id="t93" style="top:179.05px;font-size:8.69px;color:#444;left:-89.40px;width:200px;text-align:center;-webkit-text-stroke:0.05px;">5</span><span id="t94" style="top:179.05px;font-size:8.69px;color:#262626;right:572.70px;-webkit-text-stroke:0.05px;">4</span><span id="t95" style="top:179.05px;font-size:8.31px;color:#262626;letter-spacing:-0.096px;left:66.40px;-webkit-text-stroke:0.05px;">8-Jun-17</span><span id="t96" style="top:179.05px;font-size:8.7px;color:#262626;right:490.90px;-webkit-text-stroke:0.05px;">700</span><span id="t97" style="top:179.05px;font-size:8.69px;color:#262626;right:450.10px;-webkit-text-stroke:0.05px;">0</span><span id="t98" style="top:191.78px;font-size:8.69px;color:#444;left:-89.40px;width:200px;text-align:center;-webkit-text-stroke:0.05px;">6</span><span id="t99" style="top:191.78px;font-size:8.69px;color:#262626;right:572.70px;-webkit-text-stroke:0.05px;">5</span><span id="t100" style="top:191.78px;font-size:8.31px;color:#262626;letter-spacing:-0.096px;left:66.40px;-webkit-text-stroke:0.05px;">9-Jun-17</span><span id="t101" style="top:191.78px;font-size:8.7px;color:#262626;right:490.90px;-webkit-text-stroke:0.05px;">1255</span><span id="t102" style="top:191.78px;font-size:8.69px;color:#262626;right:450.10px;-webkit-text-stroke:0.05px;">0</span><span id="t103" style="top:204.51px;font-size:8.69px;color:#444;left:-89.40px;width:200px;text-align:center;-webkit-text-stroke:0.05px;">7</span><span id="t104" style="top:204.51px;font-size:8.69px;color:#262626;right:572.70px;-webkit-text-stroke:0.05px;">6</span><span id="t105" style="top:204.51px;font-size:8.31px;color:#111;letter-spacing:-0.212px;left:63.20px;-webkit-text-stroke:0.05px;-webkit-text-stroke:0.3px;">########</span><span id="t106" style="top:204.51px;font-size:8.7px;color:#262626;right:490.90px;-webkit-text-stroke:0.05px;">1216</span><span id="t107" style="top:204.51px;font-size:8.69px;color:#262626;right:450.10px;-webkit-text-stroke:0.05px;">0</span><span id="t108" style="top:217.24px;font-size:8.69px;color:#444;left:-89.40px;width:200px;text-align:center;-webkit-text-stroke:0.05px;">8</span><span id="t109" style="top:217.24px;font-size:8.69px;color:#262626;right:572.70px;-webkit-text-stroke:0.05px;">7</span><span id="t110" style="top:217.24px;font-size:8.31px;color:#111;letter-spacing:-0.212px;left:63.20px;-webkit-text-stroke:0.05px;-webkit-text-stroke:0.3px;">########</span><span id="t111" style="top:217.24px;font-size:8.7px;color:#262626;right:490.90px;-webkit-text-stroke:0.05px;">918</span><span id="t112" style="top:217.24px;font-size:8.69px;color:#262626;right:450.10px;-webkit-text-stroke:0.05px;">0</span><span id="t113" style="top:229.97px;font-size:8.69px;color:#444;left:-89.40px;width:200px;text-align:center;-webkit-text-stroke:0.05px;">9</span><span id="t114" style="top:229.97px;font-size:8.69px;color:#262626;right:572.70px;-webkit-text-stroke:0.05px;">8</span><span id="t115" style="top:229.97px;font-size:8.31px;color:#111;letter-spacing:-0.212px;left:63.20px;-webkit-text-stroke:0.05px;-webkit-text-stroke:0.3px;">########</span><span id="t116" style="top:229.97px;font-size:8.7px;color:#262626;right:490.90px;-webkit-text-stroke:0.05px;">1277</span><span id="t117" style="top:229.97px;font-size:8.69px;color:#262626;right:450.10px;-webkit-text-stroke:0.05px;">0</span><span id="t118" style="top:242.70px;font-size:8.7px;color:#444;left:-89.40px;width:200px;text-align:center;-webkit-text-stroke:0.05px;">10</span><span id="t119" style="top:242.70px;font-size:8.69px;color:#262626;right:572.70px;-webkit-text-stroke:0.05px;">9</span><span id="t120" style="top:242.70px;font-size:8.31px;color:#111;letter-spacing:-0.212px;left:63.20px;-webkit-text-stroke:0.05px;-webkit-text-stroke:0.3px;">########</span><span id="t121" style="top:242.70px;font-size:8.7px;color:#262626;right:490.90px;-webkit-text-stroke:0.05px;">1393</span><span id="t122" style="top:242.70px;font-size:8.69px;color:#262626;right:450.10px;-webkit-text-stroke:0.05px;">0</span><span id="t123" style="top:255.43px;font-size:9.28px;color:#444;letter-spacing:0.027px;left:-89.40px;width:200px;text-align:center;text-indent:0.027px;-webkit-text-stroke:0.05px;">11</span><span id="t124" style="top:255.43px;font-size:8.7px;color:#262626;right:572.70px;-webkit-text-stroke:0.05px;">10</span><span id="t125" style="top:255.43px;font-size:8.31px;color:#111;letter-spacing:-0.212px;left:63.20px;-webkit-text-stroke:0.05px;-webkit-text-stroke:0.3px;">########</span><span id="t126" style="top:255.43px;font-size:8.7px;color:#262626;right:490.90px;-webkit-text-stroke:0.05px;">1403</span><span id="t127" style="top:255.43px;font-size:8.69px;color:#262626;right:450.10px;-webkit-text-stroke:0.05px;">0</span><span id="t128" style="top:268.16px;font-size:8.7px;color:#444;left:-89.40px;width:200px;text-align:center;-webkit-text-stroke:0.05px;">12</span><span id="t129" style="top:268.16px;font-size:9.28px;color:#262626;letter-spacing:0.027px;right:572.67px;-webkit-text-stroke:0.05px;">11</span><span id="t130" style="top:268.16px;font-size:8.31px;color:#111;letter-spacing:-0.212px;left:63.20px;-webkit-text-stroke:0.05px;-webkit-text-stroke:0.3px;">########</span><span id="t131" style="top:268.16px;font-size:8.7px;color:#262626;right:490.90px;-webkit-text-stroke:0.05px;">1316</span><span id="t132" style="top:268.16px;font-size:8.69px;color:#262626;right:450.10px;-webkit-text-stroke:0.05px;">0</span><span id="t133" style="top:280.89px;font-size:8.7px;color:#444;left:-89.40px;width:200px;text-align:center;-webkit-text-stroke:0.05px;">13</span><span id="t134" style="top:280.89px;font-size:8.7px;color:#262626;right:572.70px;-webkit-text-stroke:0.05px;">12</span><span id="t135" style="top:280.89px;font-size:8.31px;color:#111;letter-spacing:-0.212px;left:63.20px;-webkit-text-stroke:0.05px;-webkit-text-stroke:0.3px;">########</span><span id="t136" style="top:280.89px;font-size:8.7px;color:#262626;right:490.90px;-webkit-text-stroke:0.05px;">1398</span><span id="t137" style="top:280.89px;font-size:8.69px;color:#262626;right:450.10px;-webkit-text-stroke:0.05px;">0</span><span id="t138" style="top:293.62px;font-size:8.7px;color:#444;left:-89.40px;width:200px;text-align:center;-webkit-text-stroke:0.05px;">14</span><span id="t139" style="top:293.62px;font-size:8.7px;color:#262626;right:572.70px;-webkit-text-stroke:0.05px;">13</span><span id="t140" style="top:293.62px;font-size:8.31px;color:#111;letter-spacing:-0.212px;left:63.20px;-webkit-text-stroke:0.05px;-webkit-text-stroke:0.3px;">########</span><span id="t141" style="top:293.62px;font-size:8.7px;color:#262626;right:490.90px;-webkit-text-stroke:0.05px;">871</span><span id="t142" style="top:293.62px;font-size:8.69px;color:#262626;right:450.10px;-webkit-text-stroke:0.05px;">0</span><span id="t143" style="top:306.35px;font-size:8.7px;color:#444;left:-89.40px;width:200px;text-align:center;-webkit-text-stroke:0.05px;">15</span><span id="t144" style="top:306.35px;font-size:8.7px;color:#262626;right:572.70px;-webkit-text-stroke:0.05px;">14</span><span id="t145" style="top:306.35px;font-size:8.31px;color:#111;letter-spacing:-0.212px;left:63.20px;-webkit-text-stroke:0.05px;-webkit-text-stroke:0.3px;">########</span><span id="t146" style="top:306.35px;font-size:8.7px;color:#262626;right:490.90px;-webkit-text-stroke:0.05px;">791</span><span id="t147" style="top:306.35px;font-size:8.69px;color:#262626;right:450.10px;-webkit-text-stroke:0.05px;">0</span><span id="t148" style="top:319.08px;font-size:8.7px;color:#444;left:-89.40px;width:200px;text-align:center;-webkit-text-stroke:0.05px;">16</span><span id="t149" style="top:319.08px;font-size:8.7px;color:#262626;right:572.70px;-webkit-text-stroke:0.05px;">15</span><span id="t150" style="top:319.08px;font-size:8.31px;color:#111;letter-spacing:-0.212px;left:63.20px;-webkit-text-stroke:0.05px;-webkit-text-stroke:0.3px;">########</span><span id="t151" style="top:319.08px;font-size:8.7px;color:#262626;right:490.90px;-webkit-text-stroke:0.05px;">1991</span><span id="t152" style="top:319.08px;font-size:8.69px;color:#262626;right:450.10px;-webkit-text-stroke:0.05px;">0</span><span id="t153" style="top:331.81px;font-size:8.7px;color:#444;left:-89.40px;width:200px;text-align:center;-webkit-text-stroke:0.05px;">17</span><span id="t154" style="top:331.81px;font-size:8.7px;color:#262626;right:572.70px;-webkit-text-stroke:0.05px;">16</span><span id="t155" style="top:331.81px;font-size:8.31px;color:#111;letter-spacing:-0.212px;left:63.20px;-webkit-text-stroke:0.05px;-webkit-text-stroke:0.3px;">########</span><span id="t156" style="top:331.81px;font-size:8.7px;color:#262626;right:490.90px;-webkit-text-stroke:0.05px;">3447</span><span id="t157" style="top:331.81px;font-size:8.69px;color:#262626;right:450.10px;-webkit-text-stroke:0.05px;">0</span><span id="t158" style="top:344.54px;font-size:8.7px;color:#444;left:-89.40px;width:200px;text-align:center;-webkit-text-stroke:0.05px;">18</span><span id="t159" style="top:344.54px;font-size:8.7px;color:#262626;right:572.70px;-webkit-text-stroke:0.05px;">17</span><span id="t160" style="top:344.54px;font-size:8.31px;color:#111;letter-spacing:-0.212px;left:63.20px;-webkit-text-stroke:0.05px;-webkit-text-stroke:0.3px;">########</span><span id="t161" style="top:344.54px;font-size:8.7px;color:#262626;right:490.90px;-webkit-text-stroke:0.05px;">2724</span><span id="t162" style="top:344.54px;font-size:8.69px;color:#262626;right:450.10px;-webkit-text-stroke:0.05px;">0</span><span id="t163" style="top:357.27px;font-size:8.7px;color:#444;left:-89.40px;width:200px;text-align:center;-webkit-text-stroke:0.05px;">19</span><span id="t164" style="top:357.27px;font-size:8.7px;color:#262626;right:572.70px;-webkit-text-stroke:0.05px;">18</span><span id="t165" style="top:357.27px;font-size:8.31px;color:#111;letter-spacing:-0.212px;left:63.20px;-webkit-text-stroke:0.05px;-webkit-text-stroke:0.3px;">########</span><span id="t166" style="top:357.27px;font-size:8.7px;color:#262626;right:490.90px;-webkit-text-stroke:0.05px;">36606</span><span id="t167" style="top:357.27px;font-size:8.69px;color:#262626;right:450.10px;-webkit-text-stroke:0.05px;">0</span><span id="t168" style="top:370.00px;font-size:8.7px;color:#444;left:-89.40px;width:200px;text-align:center;-webkit-text-stroke:0.05px;">20</span><span id="t169" style="top:370.00px;font-size:8.7px;color:#262626;right:572.70px;-webkit-text-stroke:0.05px;">19</span><span id="t170" style="top:370.00px;font-size:8.31px;color:#111;letter-spacing:-0.212px;left:63.20px;-webkit-text-stroke:0.05px;-webkit-text-stroke:0.3px;">########</span><span id="t171" style="top:370.00px;font-size:8.7px;color:#262626;right:490.90px;-webkit-text-stroke:0.05px;">18509</span><span id="t172" style="top:370.00px;font-size:8.69px;color:#262626;right:450.10px;-webkit-text-stroke:0.05px;">0</span><span id="t173" style="top:382.73px;font-size:8.7px;color:#444;left:-89.40px;width:200px;text-align:center;-webkit-text-stroke:0.05px;">21</span><span id="t174" style="top:382.73px;font-size:8.7px;color:#262626;right:572.70px;-webkit-text-stroke:0.05px;">20</span><span id="t175" style="top:382.73px;font-size:8.31px;color:#111;letter-spacing:-0.212px;left:63.20px;-webkit-text-stroke:0.05px;-webkit-text-stroke:0.3px;">########</span><span id="t176" style="top:382.73px;font-size:8.7px;color:#262626;right:490.90px;-webkit-text-stroke:0.05px;">5540</span><span id="t177" style="top:382.73px;font-size:8.69px;color:#262626;right:450.10px;-webkit-text-stroke:0.05px;">0</span><span id="t178" style="top:395.46px;font-size:8.7px;color:#444;left:-89.40px;width:200px;text-align:center;-webkit-text-stroke:0.05px;">22</span><span id="t179" style="top:395.46px;font-size:8.7px;color:#262626;right:572.70px;-webkit-text-stroke:0.05px;">21</span><span id="t180" style="top:395.46px;font-size:8.31px;color:#111;letter-spacing:-0.212px;left:63.20px;-webkit-text-stroke:0.05px;-webkit-text-stroke:0.3px;">########</span><span id="t181" style="top:395.46px;font-size:8.7px;color:#262626;right:490.90px;-webkit-text-stroke:0.05px;">4209</span><span id="t182" style="top:395.46px;font-size:8.69px;color:#262626;right:450.10px;-webkit-text-stroke:0.05px;">0</span><span id="t183" style="top:408.19px;font-size:8.7px;color:#444;left:-89.40px;width:200px;text-align:center;-webkit-text-stroke:0.05px;">23</span><span id="t184" style="top:408.19px;font-size:8.7px;color:#262626;right:572.70px;-webkit-text-stroke:0.05px;">22</span><span id="t185" style="top:408.19px;font-size:8.31px;color:#111;letter-spacing:-0.212px;left:63.20px;-webkit-text-stroke:0.05px;-webkit-text-stroke:0.3px;">########</span><span id="t186" style="top:408.19px;font-size:8.7px;color:#262626;right:490.90px;-webkit-text-stroke:0.05px;">4560</span><span id="t187" style="top:408.19px;font-size:8.69px;color:#262626;right:450.10px;-webkit-text-stroke:0.05px;">0</span><span id="t188" style="top:420.92px;font-size:8.7px;color:#444;left:-89.40px;width:200px;text-align:center;-webkit-text-stroke:0.05px;">24</span><span id="t189" style="top:420.92px;font-size:8.7px;color:#262626;right:572.70px;-webkit-text-stroke:0.05px;">23</span><span id="t190" style="top:420.92px;font-size:8.31px;color:#111;letter-spacing:-0.212px;left:63.20px;-webkit-text-stroke:0.05px;-webkit-text-stroke:0.3px;">########</span><span id="t191" style="top:420.92px;font-size:8.7px;color:#262626;right:490.90px;-webkit-text-stroke:0.05px;">3680</span><span id="t192" style="top:420.92px;font-size:8.69px;color:#262626;right:450.10px;-webkit-text-stroke:0.05px;">0</span><div style="left:19.50px;top:137.23px;width:41.00px;height:1.00px;background:#9068c8;"></div><div style="left:19.50px;top:430.02px;width:41.00px;height:1.00px;background:#9068c8;"></div><div style="left:59.60px;top:137.73px;width:1.10px;height:292.79px;background:#9068c8;"></div><div style="left:19.20px;top:136.73px;width:2.00px;height:2.00px;background:#9068c8;"></div><div style="left:59.20px;top:136.73px;width:2.00px;height:2.00px;background:#9068c8;"></div><div style="left:19.20px;top:429.52px;width:2.00px;height:2.00px;background:#9068c8;"></div><div style="left:59.20px;top:429.52px;width:2.00px;height:2.00px;background:#9068c8;"></div><div style="left:100.50px;top:137.73px;width:1.10px;height:292.79px;background:#5286d0;"></div><div style="left:141.40px;top:137.73px;width:1.10px;height:292.79px;background:#5286d0;"></div><div style="left:101.10px;top:430.02px;width:40.90px;height:1.00px;background:#5286d0;"></div><div style="left:100.00px;top:429.42px;width:2.20px;height:2.20px;background:#5286d0;"></div><div style="left:140.90px;top:429.42px;width:2.20px;height:2.20px;background:#5286d0;"></div><div style="left:100.50px;top:125.00px;width:1.10px;height:12.73px;background:#d6434c;"></div><div style="left:141.40px;top:125.00px;width:1.10px;height:12.73px;background:#d6434c;"></div><div style="left:101.10px;top:124.50px;width:40.90px;height:1.00px;background:#d6434c;"></div><div style="left:101.10px;top:137.23px;width:40.90px;height:1.00px;background:#d6434c;"></div><div style="left:100.00px;top:123.90px;width:2.20px;height:2.20px;background:#d6434c;"></div><div style="left:140.90px;top:123.90px;width:2.20px;height:2.20px;background:#d6434c;"></div><div style="left:100.00px;top:136.63px;width:2.20px;height:2.20px;background:#d6434c;"></div><div style="left:140.90px;top:136.63px;width:2.20px;height:2.20px;background:#d6434c;"></div><div style="left:618.00px;top:112.30px;width:12.00px;height:323.70px;background:#dddddd;"></div><div style="left:617.80px;top:113.30px;width:1.00px;height:320.70px;background:#c6c6c6;"></div><div style="left:620.40px;top:114.40px;width:8.40px;height:7.40px;background:#fff;border:0.5px solid #cfcfcf;box-sizing:border-box;"></div><svg style="left:622.10px;top:116.80px;" width="5" height="3" viewBox="0 0 5 3"><path d="M0.4 2.6L2.5 0.4l2.1 2.2z" fill="#666"/></svg><div style="left:620.40px;top:122.50px;width:8.40px;height:16.90px;background:#fff;border:0.5px solid #cfcfcf;box-sizing:border-box;"></div><div style="left:620.60px;top:426.80px;width:8.00px;height:7.40px;background:#fff;border:0.5px solid #cfcfcf;box-sizing:border-box;"></div><svg style="left:622.20px;top:429.20px;" width="5" height="3" viewBox="0 0 5 3"><path d="M0.4 0.4h4.2L2.5 2.6z" fill="#666"/></svg><div style="left:1.30px;top:434.00px;width:629.70px;height:15.60px;background:#e6e6e6;"></div><div style="left:1.30px;top:433.60px;width:616.70px;height:0.80px;background:#c9c9c9;"></div><svg style="left:14.50px;top:438.50px;" width="4" height="5" viewBox="0 0 4 5"><path d="M3.2 0.5L0.8 2.5l2.4 2z" fill="#c4c4c4"/></svg><svg style="left:30.50px;top:438.50px;" width="4" height="5" viewBox="0 0 4 5"><path d="M0.8 0.5l2.4 2-2.4 2z" fill="#c4c4c4"/></svg><div style="left:56.40px;top:434.00px;width:120.20px;height:14.00px;background:#fff;"></div><div style="left:56.40px;top:446.40px;width:120.20px;height:1.60px;background:#2d7d53;"></div><div style="left:56.00px;top:434.00px;width:0.60px;height:14.00px;background:#c9c9c9;"></div><span id="t193" style="top:438.71px;font-size:7.08px;color:#217346;font-weight:700;left:62.80px;">First Launches Report for Mobil</span><span id="t194" style="top:439.47px;font-size:6.55px;color:#444;letter-spacing:-0.209px;left:185.00px;">Sheet1</span><div style="left:212.30px;top:436.50px;width:0.60px;height:9.50px;background:#c4c4c4;"></div><svg style="left:230.70px;top:436.50px;" width="9" height="9" viewBox="0 0 9 9"><circle cx="4.5" cy="4.5" r="3.7" fill="none" stroke="#8a8a8a" stroke-width="0.7"/><path d="M2.6 4.5h3.8M4.5 2.6v3.8" stroke="#777" stroke-width="0.8"/></svg><div style="left:379.00px;top:438.60px;width:1.00px;height:1.00px;background:#b8b8b8;"></div><div style="left:379.00px;top:440.80px;width:1.00px;height:1.00px;background:#b8b8b8;"></div><div style="left:379.00px;top:443.00px;width:1.00px;height:1.00px;background:#b8b8b8;"></div><div style="left:395.40px;top:437.90px;width:216.40px;height:7.90px;background:#dbdbdb;"></div><div style="left:387.40px;top:437.90px;width:8.20px;height:7.90px;background:#fff;border:0.5px solid #c8c8c8;box-sizing:border-box;"></div><svg style="left:390.00px;top:439.40px;" width="3" height="5" viewBox="0 0 3 5"><path d="M2.6 0.4L0.4 2.5l2.2 2.1z" fill="#666"/></svg><div style="left:396.60px;top:437.90px;width:186.60px;height:7.90px;background:#fff;border:0.5px solid #c8c8c8;box-sizing:border-box;"></div><div style="left:612.00px;top:437.90px;width:7.60px;height:7.90px;background:#fff;border:0.5px solid #c8c8c8;box-sizing:border-box;"></div><svg style="left:614.60px;top:439.40px;" width="3" height="5" viewBox="0 0 3 5"><path d="M0.4 0.4l2.2 2.1-2.2 2.1z" fill="#666"/></svg><div style="left:1.30px;top:449.60px;width:629.70px;height:11.40px;background:#f3f3f3;"></div><div style="left:1.30px;top:449.20px;width:629.70px;height:0.70px;background:#dcdcdc;"></div><span id="t195" style="top:453.33px;font-size:6.17px;color:#444;letter-spacing:-0.124px;left:4.90px;">Ready</span><span id="t196" style="top:453.33px;font-size:6.17px;color:#444;letter-spacing:-0.030px;left:30.60px;">Calculate</span><div style="left:466.60px;top:449.90px;width:19.80px;height:11.10px;background:#d0d0d0;"></div><svg style="left:472.50px;top:451.20px;" width="8" height="7" viewBox="0 0 8 7"><path d="M0.5 0.5h6.6v5.8H0.5zM2.7 0.5v5.8M4.9 0.5v5.8M0.5 2.4h6.6M0.5 4.4h6.6" fill="none" stroke="#666" stroke-width="0.6"/></svg><svg style="left:493.60px;top:451.20px;" width="8" height="7" viewBox="0 0 8 7"><path d="M0.5 0.5h6.6v5.8H0.5z" fill="none" stroke="#777" stroke-width="0.6"/><path d="M2.2 1.6h3.2v3.6H2.2z" fill="none" stroke="#888" stroke-width="0.5"/></svg><svg style="left:514.80px;top:451.20px;" width="8" height="7" viewBox="0 0 8 7"><path d="M0.5 0.5h6.6v5.8H0.5z" fill="none" stroke="#777" stroke-width="0.6"/><path d="M2.4 0.5v3h3v-3" fill="none" stroke="#777" stroke-width="0.6"/></svg><div style="left:532.60px;top:454.70px;width:3.00px;height:0.80px;background:#555;"></div><div style="left:539.00px;top:454.80px;width:54.60px;height:0.60px;background:#b4b4b4;"></div><div style="left:565.30px;top:452.00px;width:2.30px;height:6.20px;background:#555;"></div><div style="left:594.60px;top:454.60px;width:4.20px;height:0.90px;background:#444;"></div><div style="left:596.20px;top:453.00px;width:1.00px;height:4.20px;background:#444;"></div><span id="t197" style="top:454.11px;font-size:5.84px;color:#444;left:605.30px;">115%</span><div style="left:282.40px;top:145.00px;width:305.80px;height:183.70px;background:#fff;border:0.8px solid #c8c8c8;box-sizing:border-box;"></div><svg style="left:0.00px;top:0.00px;" width="631" height="462" viewBox="0 0 631 462"><path d="M314.0 176.50H574.2" stroke="#d9d9d9" stroke-width="0.7"/><path d="M314.0 193.01H574.2" stroke="#d9d9d9" stroke-width="0.7"/><path d="M314.0 209.53H574.2" stroke="#d9d9d9" stroke-width="0.7"/><path d="M314.0 226.04H574.2" stroke="#d9d9d9" stroke-width="0.7"/><path d="M314.0 242.55H574.2" stroke="#d9d9d9" stroke-width="0.7"/><path d="M314.0 259.06H574.2" stroke="#d9d9d9" stroke-width="0.7"/><path d="M314.0 275.58H574.2" stroke="#d9d9d9" stroke-width="0.7"/><path d="M314.0 292.09H574.2" stroke="#d9d9d9" stroke-width="0.7"/><path d="M314.0 308.60H574.2" stroke="#d9d9d9" stroke-width="0.7"/><path d="M314.00 176.5V308.6" stroke="#d9d9d9" stroke-width="0.7"/><path d="M366.04 176.5V308.6" stroke="#d9d9d9" stroke-width="0.7"/><path d="M418.08 176.5V308.6" stroke="#d9d9d9" stroke-width="0.7"/><path d="M470.12 176.5V308.6" stroke="#d9d9d9" stroke-width="0.7"/><path d="M522.16 176.5V308.6" stroke="#d9d9d9" stroke-width="0.7"/><path d="M574.20 176.5V308.6" stroke="#d9d9d9" stroke-width="0.7"/><polyline fill="none" stroke="#5b9bd5" stroke-width="1.2" stroke-linejoin="round" points="324.4,307.9 334.8,306.2 345.2,306.2 355.6,306.3 366.0,304.5 376.4,304.6 386.9,305.6 397.3,304.4 407.7,304.0 418.1,304.0 428.5,304.3 438.9,304.0 449.3,305.7 459.7,306.0 470.1,302.0 480.5,297.2 490.9,299.6 501.3,187.7 511.8,247.5 522.2,290.3 532.6,294.7 543.0,293.5 553.4,296.4"/><circle cx="324.4" cy="307.9" r="2.1" fill="#5b9bd5"/><circle cx="334.8" cy="306.2" r="2.1" fill="#5b9bd5"/><circle cx="345.2" cy="306.2" r="2.1" fill="#5b9bd5"/><circle cx="355.6" cy="306.3" r="2.1" fill="#5b9bd5"/><circle cx="366.0" cy="304.5" r="2.1" fill="#5b9bd5"/><circle cx="376.4" cy="304.6" r="2.1" fill="#5b9bd5"/><circle cx="386.9" cy="305.6" r="2.1" fill="#5b9bd5"/><circle cx="397.3" cy="304.4" r="2.1" fill="#5b9bd5"/><circle cx="407.7" cy="304.0" r="2.1" fill="#5b9bd5"/><circle cx="418.1" cy="304.0" r="2.1" fill="#5b9bd5"/><circle cx="428.5" cy="304.3" r="2.1" fill="#5b9bd5"/><circle cx="438.9" cy="304.0" r="2.1" fill="#5b9bd5"/><circle cx="449.3" cy="305.7" r="2.1" fill="#5b9bd5"/><circle cx="459.7" cy="306.0" r="2.1" fill="#5b9bd5"/><circle cx="470.1" cy="302.0" r="2.1" fill="#5b9bd5"/><circle cx="480.5" cy="297.2" r="2.1" fill="#5b9bd5"/><circle cx="490.9" cy="299.6" r="2.1" fill="#5b9bd5"/><circle cx="501.3" cy="187.7" r="2.1" fill="#5b9bd5"/><circle cx="511.8" cy="247.5" r="2.1" fill="#5b9bd5"/><circle cx="522.2" cy="290.3" r="2.1" fill="#5b9bd5"/><circle cx="532.6" cy="294.7" r="2.1" fill="#5b9bd5"/><circle cx="543.0" cy="293.5" r="2.1" fill="#5b9bd5"/><circle cx="553.4" cy="296.4" r="2.1" fill="#5b9bd5"/></svg><span id="t198" style="top:173.61px;font-size:6.98px;color:#595959;right:324.00px;">40000</span><span id="t199" style="top:190.12px;font-size:6.98px;color:#595959;right:324.00px;">35000</span><span id="t200" style="top:206.63px;font-size:6.98px;color:#595959;right:324.00px;">30000</span><span id="t201" style="top:223.14px;font-size:6.98px;color:#595959;right:324.00px;">25000</span><span id="t202" style="top:239.66px;font-size:6.98px;color:#595959;right:324.00px;">20000</span><span id="t203" style="top:256.17px;font-size:6.98px;color:#595959;right:324.00px;">15000</span><span id="t204" style="top:272.68px;font-size:6.98px;color:#595959;right:324.00px;">10000</span><span id="t205" style="top:290.19px;font-size:6.97px;color:#595959;right:324.00px;">5000</span><span id="t206" style="top:306.71px;font-size:6.95px;color:#595959;right:324.00px;">0</span><span id="t207" style="top:316.41px;font-size:6.95px;color:#595959;left:214.00px;width:200px;text-align:center;">0</span><span id="t208" style="top:316.41px;font-size:6.95px;color:#595959;left:266.04px;width:200px;text-align:center;">5</span><span id="t209" style="top:316.41px;font-size:6.97px;color:#595959;left:318.08px;width:200px;text-align:center;">10</span><span id="t210" style="top:316.41px;font-size:6.97px;color:#595959;left:370.12px;width:200px;text-align:center;">15</span><span id="t211" style="top:316.41px;font-size:6.97px;color:#595959;left:422.16px;width:200px;text-align:center;">20</span><span id="t212" style="top:316.41px;font-size:6.97px;color:#595959;left:474.20px;width:200px;text-align:center;">25</span><span id="t213" style="top:154.22px;font-size:10.55px;color:#595959;left:397.60px;-webkit-text-stroke:0.05px;">Selected Period</span><svg style="left:0.00px;top:0.00px;" width="631" height="462" viewBox="0 0 631 462"><circle cx="282.4" cy="145.0" r="2.5" fill="#fff" stroke="#7a7a7a" stroke-width="0.8"/><circle cx="435.0" cy="145.0" r="2.5" fill="#fff" stroke="#7a7a7a" stroke-width="0.8"/><circle cx="587.6" cy="145.0" r="2.5" fill="#fff" stroke="#7a7a7a" stroke-width="0.8"/><circle cx="282.4" cy="236.6" r="2.5" fill="#fff" stroke="#7a7a7a" stroke-width="0.8"/><circle cx="587.6" cy="236.6" r="2.5" fill="#fff" stroke="#7a7a7a" stroke-width="0.8"/><circle cx="282.4" cy="328.2" r="2.5" fill="#fff" stroke="#7a7a7a" stroke-width="0.8"/><circle cx="435.0" cy="328.2" r="2.5" fill="#fff" stroke="#7a7a7a" stroke-width="0.8"/><circle cx="587.6" cy="328.2" r="2.5" fill="#fff" stroke="#7a7a7a" stroke-width="0.8"/></svg><div style="left:595.20px;top:144.80px;width:15.40px;height:14.80px;background:#fff;border:0.7px solid #c6c6c6;box-sizing:border-box;"></div><div style="left:595.20px;top:165.60px;width:15.40px;height:14.60px;background:#fff;border:0.7px solid #c6c6c6;box-sizing:border-box;"></div><div style="left:595.20px;top:186.40px;width:15.40px;height:14.80px;background:#fff;border:0.7px solid #c6c6c6;box-sizing:border-box;"></div><svg style="left:598.40px;top:147.60px;" width="9" height="9" viewBox="0 0 9 9"><path d="M4.5 0.6v7.8M0.6 4.5h7.8" stroke="#4f9d74" stroke-width="1.8"/></svg><svg style="left:598.00px;top:168.00px;" width="10" height="10" viewBox="0 0 10 10"><path d="M8.8 0.8L9.4 1.4 5 7 3.6 5.8z" fill="#555"/><path d="M3.4 6l1.4 1.2C4 8.6 2.4 9 0.8 8.8 2.2 8.2 2.6 7.4 3.4 6z" fill="#2b6fc4"/></svg><svg style="left:598.40px;top:189.60px;" width="9" height="9" viewBox="0 0 9 9"><path d="M0.6 0.8h7.8L5.4 4.4v4l-1.8-1.2V4.4z" fill="#666"/></svg><div style="left:330.30px;top:326.00px;width:105.20px;height:34.90px;background:#fff;border:0.7px solid #c9c9c9;box-sizing:border-box;box-shadow:0 1px 3px rgba(0,0,0,0.22);"></div><svg style="left:336.60px;top:329.60px;" width="13" height="11" viewBox="0 0 13 11"><path d="M6.3 1.5l4.5 4.4-4.4 4.3L1.8 5.8z" fill="#fff" stroke="#555" stroke-width="0.8"/><path d="M5.3 3.9V1.9a1 1 0 0 1 2 0v1.7" fill="none" stroke="#555" stroke-width="0.7"/><path d="M10.2 3.4c1.6 1.2 2.2 3 1.6 5.6-0.6-1.4-1.4-2.4-2.6-3.2z" fill="#2b6fc4"/></svg><div style="left:335.80px;top:340.10px;width:14.00px;height:3.70px;background:#ec7c28;"></div><svg style="left:349.80px;top:335.60px;" width="4" height="3" viewBox="0 0 4 3"><path d="M0.4 0.4h3L1.9 2.2z" fill="#555"/></svg><span id="t214" style="top:348.81px;font-size:6.19px;color:#444;left:339.30px;">Fill</span><svg style="left:360.00px;top:329.60px;" width="15" height="11" viewBox="0 0 15 11"><path d="M0.9 9.8V1.2h8.6M0.9 9.6h3" fill="none" stroke="#777" stroke-width="0.8"/><path d="M12.2 0.6l1.8 1.6-6.6 6.8-2.4 0.8 0.8-2.4z" fill="#2f74c8"/></svg><div style="left:360.50px;top:340.10px;width:13.50px;height:3.70px;background:#4a90d9;"></div><svg style="left:373.80px;top:335.60px;" width="4" height="3" viewBox="0 0 4 3"><path d="M0.4 0.4h3L1.9 2.2z" fill="#555"/></svg><span id="t215" style="top:348.81px;font-size:6.7px;color:#444;left:356.40px;">Outline</span><div style="left:380.40px;top:337.30px;width:53.00px;height:12.20px;background:#fff;border:0.6px solid #c8c8c8;box-sizing:border-box;"></div><span id="t216" style="top:341.81px;font-size:6.39px;color:#333;left:382.50px;">Chart Area</span><svg style="left:427.80px;top:342.40px;" width="4" height="3" viewBox="0 0 4 3"><path d="M0.4 0.4h3L1.9 2.2z" fill="#555"/></svg><div style="left:330.60px;top:67.20px;width:93.20px;height:250.80px;background:#fff;border:0.7px solid #c9c9c9;box-sizing:border-box;box-shadow:0 1px 4px rgba(0,0,0,0.28);"></div><div style="left:344.80px;top:95.30px;width:78.30px;height:11.00px;background:#e8e8e8;"></div><span id="t217" style="top:72.79px;font-size:6.49px;color:#444;left:349.10px;">Cu<u>t</u></span><span id="t218" style="top:86.59px;font-size:6.64px;color:#444;left:349.10px;"><u>C</u>opy</span><span id="t219" style="top:98.99px;font-size:6.29px;color:#4a4a4a;font-weight:700;left:349.10px;">Paste Options:</span><div style="left:349.00px;top:123.05px;width:73.30px;height:0.70px;background:#e8e8e8;"></div><span id="t220" style="top:129.19px;font-size:6.38px;color:#444;left:349.10px;">Reset to M<u>a</u>tch Style</span><div style="left:349.00px;top:137.65px;width:73.30px;height:0.70px;background:#e8e8e8;"></div><span id="t221" style="top:143.79px;font-size:6.25px;color:#444;left:349.10px;"><u>F</u>ont...</span><div style="left:349.00px;top:152.05px;width:73.30px;height:0.70px;background:#e8e8e8;"></div><span id="t222" style="top:158.19px;font-size:6.42px;color:#444;left:349.10px;">Change Chart T<u>y</u>pe...</span><span id="t223" style="top:171.39px;font-size:6.3px;color:#444;left:349.10px;"><u>S</u>ave as Template...</span><span id="t224" style="top:184.59px;font-size:6.15px;color:#444;left:349.10px;">S<u>e</u>lect Data...</span><span id="t225" style="top:197.89px;font-size:6.52px;color:#444;left:349.10px;">Mo<u>v</u>e Chart...</span><span id="t226" style="top:211.29px;font-size:6.51px;color:#b4b4b4;left:349.10px;">3-D <u>R</u>otation...</span><div style="left:349.00px;top:219.65px;width:73.30px;height:0.70px;background:#e8e8e8;"></div><span id="t227" style="top:225.69px;font-size:6.44px;color:#b4b4b4;left:349.10px;"><u>G</u>roup</span><svg style="left:415.00px;top:225.20px;" width="3.4" height="4.6" viewBox="0 0 3.4 4.6"><path d="M0.4 0.4l2.4 1.9-2.4 1.9z" fill="#c4c4c4"/></svg><span id="t228" style="top:238.69px;font-size:6.63px;color:#444;left:349.10px;">B<u>r</u>ing to Front</span><svg style="left:415.00px;top:238.20px;" width="3.4" height="4.6" viewBox="0 0 3.4 4.6"><path d="M0.4 0.4l2.4 1.9-2.4 1.9z" fill="#444"/></svg><div style="left:410.40px;top:234.60px;width:0.60px;height:11.80px;background:#e6e6e6;"></div><span id="t229" style="top:251.59px;font-size:6.31px;color:#444;left:349.10px;">Send to Bac<u>k</u></span><svg style="left:415.00px;top:251.10px;" width="3.4" height="4.6" viewBox="0 0 3.4 4.6"><path d="M0.4 0.4l2.4 1.9-2.4 1.9z" fill="#444"/></svg><div style="left:410.40px;top:247.40px;width:0.60px;height:11.80px;background:#e6e6e6;"></div><div style="left:349.00px;top:259.65px;width:73.30px;height:0.70px;background:#e8e8e8;"></div><span id="t230" style="top:266.29px;font-size:6.46px;color:#444;left:349.10px;">Assig<u>n</u> Macro...</span><div style="left:349.00px;top:274.95px;width:73.30px;height:0.70px;background:#e8e8e8;"></div><span id="t231" style="top:280.69px;font-size:6.58px;color:#444;left:349.10px;">Edit <u>A</u>lt Text...</span><span id="t232" style="top:293.79px;font-size:6.44px;color:#444;left:349.10px;"><u>F</u>ormat Chart Area...</span><div style="left:349.00px;top:302.65px;width:73.30px;height:0.70px;background:#e8e8e8;"></div><span id="t233" style="top:308.49px;font-size:6.56px;color:#b4b4b4;left:349.10px;">PivotChart <u>O</u>ptions...</span><svg style="left:333.80px;top:70.20px;" width="9" height="9.4" viewBox="0 0 9 9.4"><path d="M2.5 0.8l3.3 5.2M6.5 0.8L3.2 6" stroke="#444" stroke-width="1.1" fill="none"/><circle cx="2.3" cy="7.1" r="1.4" fill="none" stroke="#2b6fc4" stroke-width="0.85"/><circle cx="6.7" cy="7.1" r="1.4" fill="none" stroke="#2b6fc4" stroke-width="0.85"/></svg><svg style="left:333.20px;top:83.60px;" width="10" height="9.4" viewBox="0 0 10 9.4"><path d="M0.8 0.8h3.4l1.3 1.3v4.2H0.8z" fill="#fff" stroke="#555" stroke-width="0.7"/><path d="M1.8 3h1.8M1.8 4.4h1.4" stroke="#2b6fc4" stroke-width="0.6"/><path d="M3.8 2.9h3.4l1.4 1.4v4.3H3.8z" fill="#fff" stroke="#555" stroke-width="0.7"/><path d="M5 5.4h2.4M5 6.8h2.4" stroke="#2b6fc4" stroke-width="0.6"/></svg><svg style="left:334.00px;top:95.40px;" width="9" height="10" viewBox="0 0 9 10"><rect x="0.6" y="1.4" width="5.8" height="7" fill="#dcd9de"/><rect x="2.2" y="0.5" width="2.6" height="1.6" fill="none" stroke="#c8c5ca" stroke-width="0.6"/><path d="M3.6 3.6h3l1.4 1.4v4.4H3.6z" fill="#fbfafc" stroke="#bdbac0" stroke-width="0.6"/></svg><svg style="left:348.20px;top:109.20px;" width="13" height="14" viewBox="0 0 13 14"><rect x="0.8" y="2.2" width="7.8" height="9.6" fill="#dcd8df" stroke="#cfcbd2" stroke-width="0.5"/><rect x="3" y="0.7" width="3.4" height="2.2" rx="0.6" fill="#e6e3e8" stroke="#c2bec5" stroke-width="0.7"/><path d="M5.2 5.2h4l2.4 2.4v5.6H5.2z" fill="#fbfafc" stroke="#bdb9c1" stroke-width="0.7"/><path d="M9.2 5.2v2.4h2.4" fill="none" stroke="#bdb9c1" stroke-width="0.6"/></svg><svg style="left:333.20px;top:126.20px;" width="10" height="9.4" viewBox="0 0 10 9.4"><path d="M2.6 3.2h6.2v5.4H2.6z" fill="#fff" stroke="#666" stroke-width="0.7"/><path d="M2.6 4.6h6.2" stroke="#666" stroke-width="0.6"/><path d="M0.8 3.6A2.6 2.6 0 0 1 4.6 1.2" fill="none" stroke="#2b6fc4" stroke-width="1.1"/><path d="M3.4 0.2l1.6 1-1.2 1.4" fill="none" stroke="#2b6fc4" stroke-width="0.9"/></svg><span id="t234" style="top:142.11px;font-size:7.3px;color:#333;left:335.40px;">A</span><svg style="left:333.20px;top:154.80px;" width="10" height="9.6" viewBox="0 0 10 9.6"><rect x="0.6" y="4.6" width="2" height="4.6" fill="#2b6fc4"/><rect x="3.6" y="0.8" width="2" height="8.4" fill="#eaa53f"/><rect x="6.6" y="3" width="2" height="6.2" fill="#555"/></svg><svg style="left:333.20px;top:168.00px;" width="10.4" height="9.8" viewBox="0 0 10.4 9.8"><rect x="0.4" y="3" width="1.8" height="6" fill="#2b6fc4"/><rect x="2.9" y="0.6" width="1.6" height="3" fill="#eaa53f"/><path d="M3.4 3.2h5.8v6H3.4z" fill="#7a3fb5"/><rect x="4.6" y="3.2" width="3.2" height="2" fill="#fff"/><rect x="4.9" y="6.6" width="2.8" height="2.6" fill="#e9defa"/><rect x="6.6" y="0.9" width="1.6" height="1.6" fill="#555"/></svg><svg style="left:333.20px;top:181.40px;" width="10.4" height="9.8" viewBox="0 0 10.4 9.8"><rect x="0.5" y="0.8" width="7.6" height="6.6" fill="#fff" stroke="#666" stroke-width="0.7"/><path d="M0.5 2.4h7.6" stroke="#666" stroke-width="0.9"/><rect x="2" y="3.8" width="3" height="2.2" fill="#eaa53f"/><path d="M5.8 5h3.6v4.2H5.8z" fill="#fff" stroke="#666" stroke-width="0.6"/><path d="M6.8 7.6l1.6-1.6" stroke="#666" stroke-width="0.6"/></svg><svg style="left:333.20px;top:194.60px;" width="10.4" height="9.8" viewBox="0 0 10.4 9.8"><rect x="0.6" y="0.8" width="8.8" height="7.8" rx="0.8" fill="#fff" stroke="#666" stroke-width="0.7"/><path d="M2.6 6.8V3.4h1.4v3.4M4.6 6.8V2.4H6v4.4M2.4 6.8h5" fill="none" stroke="#555" stroke-width="0.6"/><path d="M4.4 4.6h3.2v2.2H4.4z" fill="#d8d8d8" stroke="#666" stroke-width="0.5"/></svg><svg style="left:333.80px;top:208.00px;" width="9" height="9.6" viewBox="0 0 9 9.6"><path d="M1 2.4h5.6v6H1z" fill="#f6f3f7" stroke="#cfcbd2" stroke-width="0.7"/><path d="M1 2.4l1.6-1.6h5.6v6L6.6 8.4M6.6 2.4l1.6-1.6" fill="none" stroke="#cfcbd2" stroke-width="0.7"/></svg><svg style="left:333.20px;top:222.40px;" width="10" height="10" viewBox="0 0 10 10"><path d="M1.4 1.4h7v7h-7z" fill="none" stroke="#c2c2c2" stroke-width="0.6" stroke-dasharray="1.2 0.8"/><path d="M3.4 3.2h3.2v3.6H3.4z" fill="#f1eef3" stroke="#c0c0c0" stroke-width="0.6"/><path d="M0.4 0.4h1.6v1.6H0.4zM7.8 0.4h1.6v1.6H7.8zM0.4 7.8h1.6v1.6H0.4zM7.8 7.8h1.6v1.6H7.8z" fill="#f3f3f3" stroke="#bcbcbc" stroke-width="0.5"/></svg><svg style="left:333.20px;top:235.60px;" width="10" height="10" viewBox="0 0 10 10"><path d="M0.6 0.6h3.6v3.6H0.6z" fill="#fff" stroke="#666" stroke-width="0.6"/><path d="M5.6 5.6h3.6v3.6H5.6z" fill="#fff" stroke="#666" stroke-width="0.6"/><rect x="2" y="2" width="5.6" height="5.6" fill="#f0b867"/></svg><svg style="left:333.20px;top:248.60px;" width="10" height="10" viewBox="0 0 10 10"><rect x="2.4" y="2.4" width="5" height="5" fill="#f0b867"/><path d="M0.6 0.6h3.6v3.6H0.6z" fill="#fff" stroke="#666" stroke-width="0.6"/><path d="M5.6 5.6h3.6v3.6H5.6z" fill="#fff" stroke="#666" stroke-width="0.6"/></svg><svg style="left:333.20px;top:277.40px;" width="10.4" height="10" viewBox="0 0 10.4 10"><rect x="0.6" y="0.8" width="7.6" height="6.8" fill="#fff" stroke="#666" stroke-width="0.7"/><path d="M1.2 6.8l2.2-2.6 1.6 1.6 1-1 1.6 2z" fill="#2b6fc4"/><circle cx="6" cy="2.6" r="0.7" fill="#666"/><rect x="4.6" y="6.6" width="5.2" height="2.6" rx="0.6" fill="#fff" stroke="#777" stroke-width="0.5"/></svg><svg style="left:333.20px;top:290.40px;" width="10.4" height="10" viewBox="0 0 10.4 10"><rect x="0.8" y="4.2" width="1.5" height="4" fill="#555"/><rect x="3" y="2" width="1.5" height="6.2" fill="#555"/><rect x="5.2" y="3.4" width="1.5" height="3" fill="#555"/><path d="M9.2 1.2l0.7 0.7-3.6 4.4-1.2-1z" fill="#555"/><path d="M4.9 5.6l1.2 1c-0.8 1.6-2.6 2.6-5 2.4 1.8-0.6 3-1.6 3.8-3.4z" fill="#2b6fc4"/></svg><svg style="left:333.20px;top:305.00px;" width="10.4" height="10" viewBox="0 0 10.4 10"><rect x="0.6" y="0.6" width="6.4" height="6.4" fill="#f4f1f5" stroke="#cbc7ce" stroke-width="0.6"/><path d="M0.6 2.6h6.4M2.6 0.6v6.4" stroke="#cbc7ce" stroke-width="0.6"/><rect x="4.2" y="4.2" width="5.4" height="5.2" fill="#f7f5f8" stroke="#cbc7ce" stroke-width="0.6"/><path d="M4.2 5.6h5.4" stroke="#cbc7ce" stroke-width="0.8"/></svg><div style="left:0.00px;top:36.00px;width:1.00px;height:426.00px;background:#72a98b;"></div><div style="left:630.00px;top:36.00px;width:1.00px;height:426.00px;background:#76aa8e;"></div><div style="left:0.00px;top:461.00px;width:631.00px;height:1.00px;background:#80ae95;"></div>
</div></body></html>
